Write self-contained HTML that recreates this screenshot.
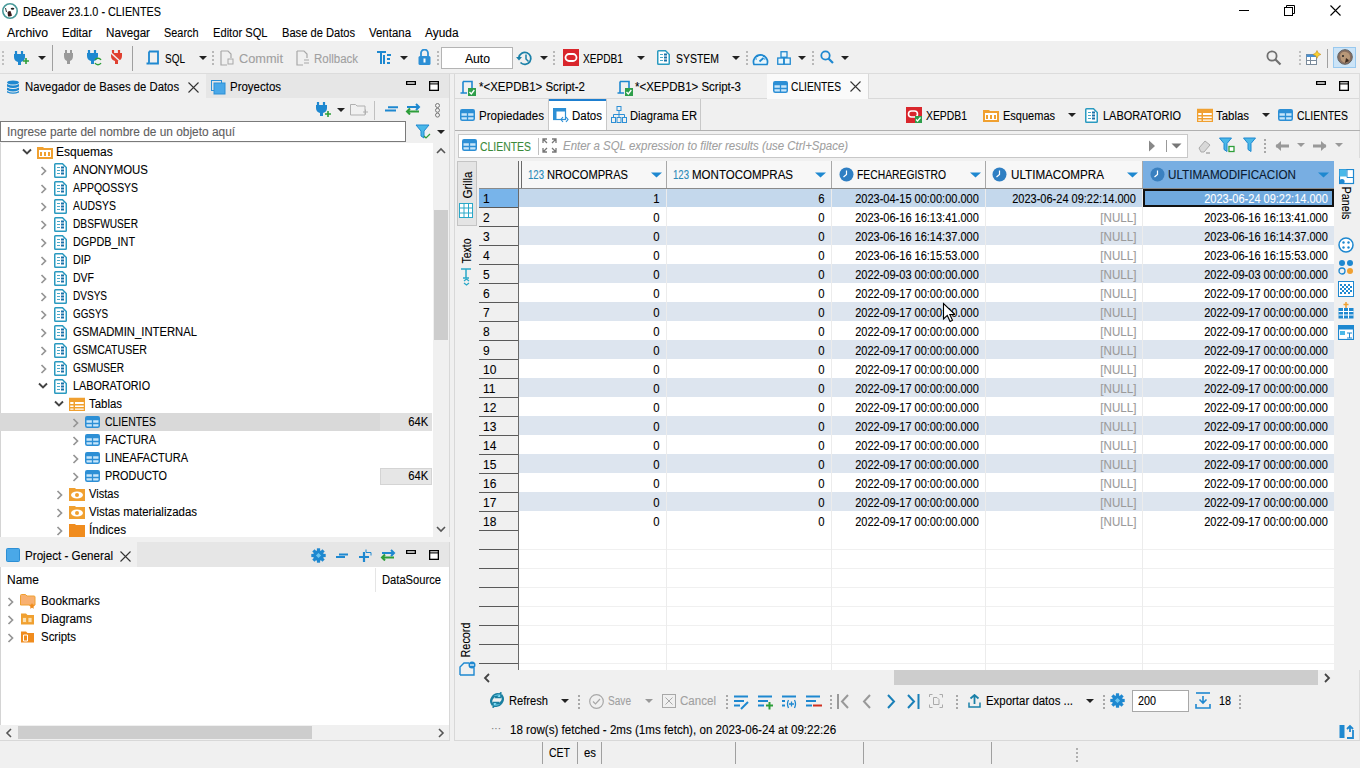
<!DOCTYPE html><html><head><meta charset="utf-8"><style>
html,body{margin:0;padding:0;width:1360px;height:768px;overflow:hidden;background:#f0f0f0;font-family:"Liberation Sans",sans-serif;}
.a{position:absolute;}
.t{position:absolute;white-space:nowrap;-webkit-text-stroke:0.1px currentColor;}

</style></head><body>
<div class="a" style="left:0px;top:0px;width:1360px;height:41px;background:#ffffff;"></div>
<svg class="a" style="left:2px;top:3px;" width="16" height="16" viewBox="0 0 16 16"><circle cx="8" cy="8" r="7.2" fill="#fff" stroke="#4a9a9a" stroke-width="1.6"/><path d="M5.5 9 q1-1 3-1 l1.5 4.5 q-2 1.5-4 0.8z" fill="#3a1a1a"/><ellipse cx="10.5" cy="5.8" rx="1.8" ry="1" fill="#222"/><path d="M3.5 5 l1 4" stroke="#333" stroke-width="1"/></svg>
<div class="t" style="top:5.3px;font-size:12px;line-height:15px;color:#000;left:23px;transform:scaleX(0.9038);transform-origin:0 0;">DBeaver 23.1.0 - CLIENTES</div>
<div class="a" style="left:1239px;top:10px;width:10px;height:1px;background:#000;"></div>
<svg class="a" style="left:1284px;top:5px;" width="11" height="11" viewBox="0 0 11 11"><rect x="0.5" y="2.5" width="8" height="8" fill="none" stroke="#000"/><path d="M2.5 2.5 v-2 h8 v8 h-2" fill="none" stroke="#000"/></svg>
<svg class="a" style="left:1330px;top:5px;" width="11" height="11" viewBox="0 0 11 11"><path d="M0.5 0.5 L10.5 10.5 M10.5 0.5 L0.5 10.5" stroke="#000" stroke-width="1.1"/></svg>
<div class="t" style="top:26.3px;font-size:12px;line-height:15px;color:#000;left:7px;transform:scaleX(1.0246);transform-origin:0 0;">Archivo</div>
<div class="t" style="top:26.3px;font-size:12px;line-height:15px;color:#000;left:62px;transform:scaleX(0.9571);transform-origin:0 0;">Editar</div>
<div class="t" style="top:26.3px;font-size:12px;line-height:15px;color:#000;left:106px;transform:scaleX(0.9700);transform-origin:0 0;">Navegar</div>
<div class="t" style="top:26.3px;font-size:12px;line-height:15px;color:#000;left:164px;transform:scaleX(0.9075);transform-origin:0 0;">Search</div>
<div class="t" style="top:26.3px;font-size:12px;line-height:15px;color:#000;left:213px;transform:scaleX(0.9289);transform-origin:0 0;">Editor SQL</div>
<div class="t" style="top:26.3px;font-size:12px;line-height:15px;color:#000;left:282px;transform:scaleX(0.9277);transform-origin:0 0;">Base de Datos</div>
<div class="t" style="top:26.3px;font-size:12px;line-height:15px;color:#000;left:369px;transform:scaleX(0.9539);transform-origin:0 0;">Ventana</div>
<div class="t" style="top:26.3px;font-size:12px;line-height:15px;color:#000;left:425px;transform:scaleX(0.9912);transform-origin:0 0;">Ayuda</div>
<div class="a" style="left:0px;top:41px;width:1360px;height:32px;background:#f0f0f0;"></div>
<div class="a" style="left:0px;top:73px;width:1360px;height:1px;background:#dcdcdc;"></div>
<div class="a" style="left:1.5px;top:51px;width:2px;height:2px;background:#c0c0c0;"></div>
<div class="a" style="left:1.5px;top:55px;width:2px;height:2px;background:#c0c0c0;"></div>
<div class="a" style="left:1.5px;top:59px;width:2px;height:2px;background:#c0c0c0;"></div>
<div class="a" style="left:1.5px;top:63px;width:2px;height:2px;background:#c0c0c0;"></div>
<svg class="a" style="left:13px;top:50px;" width="16" height="16" viewBox="0 0 16 16"><path d="M3 1 v3 M9 1 v3" stroke="#1e88d0" stroke-width="2.2"/><path d="M1 4 h11 v3 q0 4-4 5 v3 h-3 v-3 q-4-1-4-5z" fill="#1e88d0"/><path d="M10 11 h6 M13 8 v6" stroke="#2e9e3a" stroke-width="1.6"/></svg>
<svg class="a" style="left:37px;top:55px;" width="10" height="6" viewBox="0 0 10 6"><path d="M1 1 L9 1 L5 5 Z" fill="#222"/></svg>
<div class="a" style="left:52px;top:45px;width:1px;height:26px;background:#a0a0a0;"></div>
<svg class="a" style="left:64px;top:50px;" width="10" height="14" viewBox="0 0 10 14"><path d="M2 0 v3 M7 0 v3" stroke="#9a9a9a" stroke-width="2"/><path d="M0 3 h9 v3 q0 4-3 5 v3 h-3 v-3 q-3-1-3-5z" fill="#9a9a9a"/></svg>
<svg class="a" style="left:86px;top:50px;" width="16" height="16" viewBox="0 0 16 16"><path d="M3 0 v3 M9 0 v3" stroke="#1e88d0" stroke-width="2.2"/><path d="M1 3 h11 v3 q0 4-4 5 v3 h-3 v-3 q-4-1-4-5z" fill="#1e88d0"/><path d="M9 10 a3.5 3.5 0 0 1 6 0 M15 13 a3.5 3.5 0 0 1 -6 0" fill="none" stroke="#2e9e3a" stroke-width="1.4"/></svg>
<svg class="a" style="left:110px;top:50px;" width="14" height="16" viewBox="0 0 14 16"><path d="M3 0 v3 M9 0 v3" stroke="#e04030" stroke-width="2.2"/><path d="M1 3 h11 v3 q0 4-4 5 v3 h-3 v-3 q-4-1-4-5z" fill="#e04030"/><path d="M0 2 L13 14" stroke="#f0f0f0" stroke-width="1.5"/></svg>
<div class="a" style="left:132px;top:46px;width:1px;height:25px;background:#a0a0a0;"></div>
<svg class="a" style="left:146px;top:50px;" width="13" height="16" viewBox="0 0 13 16"><path d="M3 1.5 h9 v12 h-8 M3 1.5 v12 h-2.5" fill="none" stroke="#1e88d0" stroke-width="1.8"/></svg>
<div class="t" style="top:52.3px;font-size:12px;line-height:15px;color:#000;left:165px;transform:scaleX(0.8333);transform-origin:0 0;">SQL</div>
<svg class="a" style="left:198px;top:55px;" width="10" height="6" viewBox="0 0 10 6"><path d="M1 1 L9 1 L5 5 Z" fill="#222"/></svg>
<div class="a" style="left:211.5px;top:51px;width:2px;height:2px;background:#b8b8b8;"></div>
<div class="a" style="left:211.5px;top:55px;width:2px;height:2px;background:#b8b8b8;"></div>
<div class="a" style="left:211.5px;top:59px;width:2px;height:2px;background:#b8b8b8;"></div>
<div class="a" style="left:211.5px;top:63px;width:2px;height:2px;background:#b8b8b8;"></div>
<svg class="a" style="left:220px;top:50px;" width="14" height="16" viewBox="0 0 14 16"><path d="M1 1 h7 l3 3 v4 M1 1 v14 h6" fill="none" stroke="#a8a8a8" stroke-width="1.2"/><rect x="8" y="9" width="5" height="5" fill="none" stroke="#a8a8a8"/></svg>
<div class="t" style="top:52.3px;font-size:12px;line-height:15px;color:#a0a0a0;left:239px;transform:scaleX(1.0642);transform-origin:0 0;">Commit</div>
<svg class="a" style="left:296px;top:50px;" width="14" height="16" viewBox="0 0 14 16"><path d="M1 1 h7 l3 3 v4 M1 1 v14 h6" fill="none" stroke="#a8a8a8" stroke-width="1.2"/><path d="M8 10 h5 M8 13 h5" stroke="#a8a8a8"/></svg>
<div class="t" style="top:52.3px;font-size:12px;line-height:15px;color:#a0a0a0;left:314px;transform:scaleX(0.9559);transform-origin:0 0;">Rollback</div>
<svg class="a" style="left:376px;top:50px;" width="16" height="16" viewBox="0 0 16 16"><path d="M1 2 h9 M5 2 v12 M8 5 v9 M11 5 h4 M11 9 h3 M11 13 h3" stroke="#1e88d0" stroke-width="2"/></svg>
<svg class="a" style="left:399px;top:55px;" width="10" height="6" viewBox="0 0 10 6"><path d="M1 1 L9 1 L5 5 Z" fill="#222"/></svg>
<svg class="a" style="left:418px;top:49px;" width="13" height="17" viewBox="0 0 13 17"><path d="M3 7 v-3 a3.5 3.5 0 0 1 7 0 v3" fill="none" stroke="#2d8fd5" stroke-width="1.8"/><rect x="0.5" y="7" width="12" height="9" rx="1.5" fill="#2d8fd5"/><rect x="5.5" y="9.5" width="2" height="4" fill="#fff"/></svg>
<div class="a" style="left:436.5px;top:51px;width:2px;height:2px;background:#b8b8b8;"></div>
<div class="a" style="left:436.5px;top:55px;width:2px;height:2px;background:#b8b8b8;"></div>
<div class="a" style="left:436.5px;top:59px;width:2px;height:2px;background:#b8b8b8;"></div>
<div class="a" style="left:436.5px;top:63px;width:2px;height:2px;background:#b8b8b8;"></div>
<div class="a" style="left:441px;top:47px;width:72px;height:22px;background:#fff;box-sizing:border-box;border:1px solid #b4b4b4;"></div>
<div class="t" style="top:52.3px;font-size:12px;line-height:15px;color:#000;left:465px;transform:scaleX(1.0133);transform-origin:0 0;">Auto</div>
<svg class="a" style="left:516px;top:50px;" width="17" height="16" viewBox="0 0 17 16"><path d="M4.5 12.5 a6 6 0 1 0 -1.6 -5" fill="none" stroke="#1a80a8" stroke-width="1.8"/><path d="M0 7 h6 l-3 3.5z" fill="#1a80a8"/><path d="M10 4.5 v4.5 l2.5 2.5" fill="none" stroke="#1a80a8" stroke-width="1.5"/></svg>
<svg class="a" style="left:539px;top:55px;" width="10" height="6" viewBox="0 0 10 6"><path d="M1 1 L9 1 L5 5 Z" fill="#222"/></svg>
<div class="a" style="left:552.5px;top:51px;width:2px;height:2px;background:#b8b8b8;"></div>
<div class="a" style="left:552.5px;top:55px;width:2px;height:2px;background:#b8b8b8;"></div>
<div class="a" style="left:552.5px;top:59px;width:2px;height:2px;background:#b8b8b8;"></div>
<div class="a" style="left:552.5px;top:63px;width:2px;height:2px;background:#b8b8b8;"></div>
<svg class="a" style="left:563px;top:49px;" width="16" height="17" viewBox="0 0 16 17"><rect x="0" y="0" width="16" height="17" fill="#d9262c"/><rect x="2.5" y="5" width="11" height="7" rx="3.5" fill="none" stroke="#fff" stroke-width="1.8"/></svg>
<div class="t" style="top:52.3px;font-size:12px;line-height:15px;color:#000;left:583px;transform:scaleX(0.8449);transform-origin:0 0;">XEPDB1</div>
<svg class="a" style="left:636px;top:55px;" width="10" height="6" viewBox="0 0 10 6"><path d="M1 1 L9 1 L5 5 Z" fill="#222"/></svg>
<svg class="a" style="left:657px;top:50px;" width="13" height="15" viewBox="0 0 13 15"><path d="M0.75 1.5 q0-0.75 0.75-0.75 h7 l3.75 3.75 v9 q0 0.75-0.75 0.75 h-10 q-0.75 0-0.75-0.75z" fill="#fff" stroke="#2a9ac0" stroke-width="1.5"/><path d="M3 4.5 h3 M3 7.5 h3 M3 10.5 h3" stroke="#4aa8c8" stroke-width="1.1"/><path d="M7 4.5 h3 M7 7.5 h3 M7 10.5 h3" stroke="#1a70a8" stroke-width="1.8"/></svg>
<div class="t" style="top:52.3px;font-size:12px;line-height:15px;color:#000;left:676px;transform:scaleX(0.8717);transform-origin:0 0;">SYSTEM</div>
<svg class="a" style="left:731px;top:55px;" width="10" height="6" viewBox="0 0 10 6"><path d="M1 1 L9 1 L5 5 Z" fill="#222"/></svg>
<div class="a" style="left:745.5px;top:51px;width:2px;height:2px;background:#b8b8b8;"></div>
<div class="a" style="left:745.5px;top:55px;width:2px;height:2px;background:#b8b8b8;"></div>
<div class="a" style="left:745.5px;top:59px;width:2px;height:2px;background:#b8b8b8;"></div>
<div class="a" style="left:745.5px;top:63px;width:2px;height:2px;background:#b8b8b8;"></div>
<svg class="a" style="left:752px;top:51px;" width="17" height="15" viewBox="0 0 17 15"><path d="M2 13.5 a7 7 0 1 1 13 0 z" fill="#e8f6fc" stroke="#1e88d0" stroke-width="1.7"/><path d="M8.5 3 v1.5 M3.5 8 h1.5 M12 8 h1.5 M5 4.8 l1 1 M12 4.8 l-1 1" stroke="#1e88d0" stroke-width="1.2"/><path d="M7.5 10.5 l4 -3.5" stroke="#1e88d0" stroke-width="1.8"/></svg>
<svg class="a" style="left:777px;top:51px;" width="14" height="14" viewBox="0 0 14 14"><rect x="4" y="0.75" width="6" height="5.5" fill="#e8f6fc" stroke="#1e88d0" stroke-width="1.3"/><rect x="0.75" y="7" width="6" height="6.25" fill="#e8f6fc" stroke="#1e88d0" stroke-width="1.3"/><rect x="7.25" y="7" width="6" height="6.25" fill="#e8f6fc" stroke="#1e88d0" stroke-width="1.3"/></svg>
<svg class="a" style="left:797px;top:55px;" width="10" height="6" viewBox="0 0 10 6"><path d="M1 1 L9 1 L5 5 Z" fill="#222"/></svg>
<div class="a" style="left:811.5px;top:51px;width:2px;height:2px;background:#b8b8b8;"></div>
<div class="a" style="left:811.5px;top:55px;width:2px;height:2px;background:#b8b8b8;"></div>
<div class="a" style="left:811.5px;top:59px;width:2px;height:2px;background:#b8b8b8;"></div>
<div class="a" style="left:811.5px;top:63px;width:2px;height:2px;background:#b8b8b8;"></div>
<svg class="a" style="left:820px;top:50px;" width="14" height="14" viewBox="0 0 14 14"><circle cx="5.5" cy="5.5" r="4.2" fill="none" stroke="#1e88d0" stroke-width="1.8"/><path d="M8.5 8.5 l4.5 4.5" stroke="#1e88d0" stroke-width="2.2"/></svg>
<svg class="a" style="left:840px;top:55px;" width="10" height="6" viewBox="0 0 10 6"><path d="M1 1 L9 1 L5 5 Z" fill="#222"/></svg>
<svg class="a" style="left:1266px;top:50px;" width="16" height="16" viewBox="0 0 16 16"><circle cx="6" cy="6" r="4.6" fill="none" stroke="#707070" stroke-width="1.8"/><path d="M9.5 9.5 l5 5" stroke="#707070" stroke-width="2.2"/></svg>
<div class="a" style="left:1298.5px;top:51px;width:2px;height:2px;background:#c0c0c0;"></div>
<div class="a" style="left:1298.5px;top:55px;width:2px;height:2px;background:#c0c0c0;"></div>
<div class="a" style="left:1298.5px;top:59px;width:2px;height:2px;background:#c0c0c0;"></div>
<div class="a" style="left:1298.5px;top:63px;width:2px;height:2px;background:#c0c0c0;"></div>
<svg class="a" style="left:1306px;top:50px;" width="15" height="15" viewBox="0 0 15 15"><rect x="0.5" y="4.5" width="10" height="10" fill="#fff" stroke="#7a8a9a"/><rect x="0.5" y="4.5" width="10" height="2.5" fill="#4a90d0"/><path d="M0.5 10.5 h10 M4.5 7 v7.5" stroke="#7a8a9a"/><path d="M11 0.5 l1.3 2.6 2.6 1.3 -2.6 1.3 -1.3 2.6 -1.3 -2.6 -2.6 -1.3 2.6 -1.3z" fill="#f8d030" stroke="#c89020" stroke-width="0.6"/></svg>
<div class="a" style="left:1327px;top:49px;width:1px;height:19px;background:#a0a0a0;"></div>
<div class="a" style="left:1333px;top:47px;width:23px;height:21px;background:#cce4f7;box-sizing:border-box;border:1px solid #99c9ef;"></div>
<svg class="a" style="left:1337px;top:49px;" width="16" height="16" viewBox="0 0 16 16"><circle cx="8" cy="8" r="7.3" fill="#8a7060" stroke="#606060" stroke-width="1"/><path d="M3 6 q2-4 6-3 q4 1 4 5 q0 4-4 6 q-3 0-5-3z" fill="#b89878"/><circle cx="6" cy="7" r="1" fill="#222"/><path d="M9 9 q2 1 3 3 l-4 2z" fill="#3a2a20"/></svg>
<div class="a" style="left:0px;top:74px;width:450px;height:463px;background:#f0f0f0;"></div>
<div class="a" style="left:449px;top:74px;width:1px;height:463px;background:#d8d8d8;"></div>
<div class="a" style="left:0px;top:74px;width:449px;height:24px;background:#e6e6e6;"></div>
<div class="a" style="left:0px;top:74px;width:206px;height:24px;background:#f0f0f0;"></div>
<svg class="a" style="left:6px;top:80px;" width="14" height="14" viewBox="0 0 14 14"><ellipse cx="7" cy="2.5" rx="6" ry="2" fill="#1e88d0"/><path d="M1 4 q6 3 12 0 v2.5 q-6 3-12 0z M1 7.5 q6 3 12 0 v2.5 q-6 3-12 0z M1 11 q6 3 12 0 v1.5 q-6 2.5-12 0z" fill="#1e88d0"/></svg>
<div class="t" style="top:80.3px;font-size:12px;line-height:15px;color:#000;left:25px;transform:scaleX(0.9425);transform-origin:0 0;">Navegador de Bases de Datos</div>
<svg class="a" style="left:188px;top:82px;" width="11" height="11" viewBox="0 0 11 11"><path d="M0.5 0.5 L10.5 10.5 M10.5 0.5 L0.5 10.5" stroke="#333" stroke-width="1.1"/></svg>
<svg class="a" style="left:211px;top:80px;" width="15" height="15" viewBox="0 0 15 15"><rect x="0.5" y="0.5" width="10" height="10" fill="none" stroke="#2d8fd5"/><rect x="3" y="3" width="11" height="11" fill="#4aa8e8" stroke="#2d8fd5"/></svg>
<div class="t" style="top:80.3px;font-size:12px;line-height:15px;color:#000;left:230px;transform:scaleX(0.9561);transform-origin:0 0;">Proyectos</div>
<svg class="a" style="left:406px;top:81px;" width="10" height="4" viewBox="0 0 10 4"><rect x="0.65" y="0.65" width="8.7" height="2.7" fill="#fff" stroke="#000" stroke-width="1.3"/></svg>
<svg class="a" style="left:429px;top:81px;" width="10" height="10" viewBox="0 0 10 10"><rect x="0.65" y="0.65" width="8.7" height="8.7" fill="#fff" stroke="#000" stroke-width="1.3"/><path d="M0.65 2.9 h8.7" stroke="#000" stroke-width="1.1"/></svg>
<svg class="a" style="left:315px;top:102px;" width="17" height="16" viewBox="0 0 17 16"><path d="M3 0 v3 M9 0 v3" stroke="#1e88d0" stroke-width="2.2"/><path d="M1 3 h11 v3 q0 4-4 5 v3 h-3 v-3 q-4-1-4-5z" fill="#1e88d0"/><path d="M10 12 h6 M13 9 v6" stroke="#2e9e3a" stroke-width="1.6"/></svg>
<svg class="a" style="left:336px;top:107px;" width="10" height="6" viewBox="0 0 10 6"><path d="M1 1 L9 1 L5 5 Z" fill="#222"/></svg>
<svg class="a" style="left:350px;top:102px;" width="18" height="14" viewBox="0 0 18 14"><path d="M0.5 2.5 h5 l1.5 1.5 h8 v9 h-14.5z" fill="none" stroke="#b0b0b0"/><path d="M13 10 h5 M15.5 7.5 v5" stroke="#b0b0b0"/></svg>
<div class="a" style="left:374px;top:101px;width:1px;height:19px;background:#c0c0c0;"></div>
<svg class="a" style="left:384px;top:106px;" width="15" height="6" viewBox="0 0 15 6"><path d="M4 1.2 h10 M1 4.5 h11" stroke="#1e88d0" stroke-width="2"/></svg>
<svg class="a" style="left:404px;top:103px;" width="18" height="12" viewBox="0 0 18 12"><path d="M3 4 h12 M12 1 l3 3 -3 3" fill="none" stroke="#1e88d0" stroke-width="2"/><path d="M15 8.5 h-12 M6 5.5 l-3 3 3 3" fill="none" stroke="#2e9e3a" stroke-width="2"/></svg>
<svg class="a" style="left:434px;top:103px;" width="7" height="15" viewBox="0 0 7 15"><circle cx="3.5" cy="2.5" r="2" fill="none" stroke="#777"/><circle cx="3.5" cy="7.3" r="2" fill="none" stroke="#777"/><circle cx="3.5" cy="12.1" r="2" fill="none" stroke="#777"/></svg>
<div class="a" style="left:0px;top:121px;width:406px;height:21px;background:#fff;box-sizing:border-box;border:1px solid #7a7a7a;"></div>
<div class="t" style="top:125.3px;font-size:12px;line-height:15px;color:#606060;left:7px;transform:scaleX(0.9910);transform-origin:0 0;">Ingrese parte del nombre de un objeto aquí</div>
<svg class="a" style="left:415px;top:124px;" width="17" height="16" viewBox="0 0 17 16"><path d="M1 1 h13 l-5 6 v7 l-3 -2 v-5z" fill="#4ab8e8" stroke="#1e88d0" stroke-width="1"/><path d="M9 12 l2 2 4 -4" fill="none" stroke="#2e9e3a" stroke-width="1.2"/></svg>
<svg class="a" style="left:436px;top:129px;" width="10" height="6" viewBox="0 0 10 6"><path d="M1 1 L9 1 L5 5 Z" fill="#222"/></svg>
<div class="a" style="left:0px;top:143px;width:433px;height:394px;background:#ffffff;"></div>
<div class="a" style="left:433px;top:143px;width:16px;height:394px;background:#f0f0f0;"></div>
<div class="a" style="left:0px;top:143px;width:1px;height:394px;background:#d4d4d4;"></div>
<div class="a" style="left:434px;top:210px;width:14px;height:130px;background:#cdcdcd;"></div>
<svg class="a" style="left:436px;top:147px;" width="10" height="7" viewBox="0 0 10 7"><path d="M1 6 L5 2 L9 6" fill="none" stroke="#555" stroke-width="1.6"/></svg>
<svg class="a" style="left:436px;top:526px;" width="10" height="7" viewBox="0 0 10 7"><path d="M1 1 L5 5 L9 1" fill="none" stroke="#555" stroke-width="1.6"/></svg>
<svg class="a" style="left:22px;top:148px;" width="10" height="8" viewBox="0 0 10 8"><path d="M1 1.5 L5 5.5 L9 1.5" fill="none" stroke="#444" stroke-width="1.9"/></svg>
<svg class="a" style="left:37px;top:145px;" width="16" height="14" viewBox="0 0 16 14"><path d="M0 2 h6 l1 1 h9 v11 h-16z" fill="#f0a030"/><rect x="2" y="5" width="12" height="7" fill="#fff"/><rect x="3" y="7" width="2" height="4" fill="#f0a030"/><rect x="7" y="7" width="2" height="4" fill="#f0a030"/><rect x="11" y="7" width="2" height="4" fill="#f0a030"/></svg>
<div class="t" style="top:145.3px;font-size:12px;line-height:15px;color:#000;left:56px;">Esquemas</div>
<svg class="a" style="left:40px;top:166px;" width="8" height="10" viewBox="0 0 8 10"><path d="M1.5 1 L5.5 5 L1.5 9" fill="none" stroke="#959595" stroke-width="1.7"/></svg>
<svg class="a" style="left:54px;top:163px;" width="13" height="15" viewBox="0 0 13 15"><path d="M0.75 1.5 q0-0.75 0.75-0.75 h7 l3.75 3.75 v9 q0 0.75-0.75 0.75 h-10 q-0.75 0-0.75-0.75z" fill="#fff" stroke="#2a9ac0" stroke-width="1.5"/><path d="M3 4.5 h3 M3 7.5 h3 M3 10.5 h3" stroke="#4aa8c8" stroke-width="1.1"/><path d="M7 4.5 h3 M7 7.5 h3 M7 10.5 h3" stroke="#1a70a8" stroke-width="1.8"/></svg>
<div class="t" style="top:163.3px;font-size:12px;line-height:15px;color:#000;left:73px;transform:scaleX(0.9533);transform-origin:0 0;">ANONYMOUS</div>
<svg class="a" style="left:40px;top:184px;" width="8" height="10" viewBox="0 0 8 10"><path d="M1.5 1 L5.5 5 L1.5 9" fill="none" stroke="#959595" stroke-width="1.7"/></svg>
<svg class="a" style="left:54px;top:181px;" width="13" height="15" viewBox="0 0 13 15"><path d="M0.75 1.5 q0-0.75 0.75-0.75 h7 l3.75 3.75 v9 q0 0.75-0.75 0.75 h-10 q-0.75 0-0.75-0.75z" fill="#fff" stroke="#2a9ac0" stroke-width="1.5"/><path d="M3 4.5 h3 M3 7.5 h3 M3 10.5 h3" stroke="#4aa8c8" stroke-width="1.1"/><path d="M7 4.5 h3 M7 7.5 h3 M7 10.5 h3" stroke="#1a70a8" stroke-width="1.8"/></svg>
<div class="t" style="top:181.3px;font-size:12px;line-height:15px;color:#000;left:73px;transform:scaleX(0.8707);transform-origin:0 0;">APPQOSSYS</div>
<svg class="a" style="left:40px;top:202px;" width="8" height="10" viewBox="0 0 8 10"><path d="M1.5 1 L5.5 5 L1.5 9" fill="none" stroke="#959595" stroke-width="1.7"/></svg>
<svg class="a" style="left:54px;top:199px;" width="13" height="15" viewBox="0 0 13 15"><path d="M0.75 1.5 q0-0.75 0.75-0.75 h7 l3.75 3.75 v9 q0 0.75-0.75 0.75 h-10 q-0.75 0-0.75-0.75z" fill="#fff" stroke="#2a9ac0" stroke-width="1.5"/><path d="M3 4.5 h3 M3 7.5 h3 M3 10.5 h3" stroke="#4aa8c8" stroke-width="1.1"/><path d="M7 4.5 h3 M7 7.5 h3 M7 10.5 h3" stroke="#1a70a8" stroke-width="1.8"/></svg>
<div class="t" style="top:199.3px;font-size:12px;line-height:15px;color:#000;left:73px;transform:scaleX(0.8714);transform-origin:0 0;">AUDSYS</div>
<svg class="a" style="left:40px;top:220px;" width="8" height="10" viewBox="0 0 8 10"><path d="M1.5 1 L5.5 5 L1.5 9" fill="none" stroke="#959595" stroke-width="1.7"/></svg>
<svg class="a" style="left:54px;top:217px;" width="13" height="15" viewBox="0 0 13 15"><path d="M0.75 1.5 q0-0.75 0.75-0.75 h7 l3.75 3.75 v9 q0 0.75-0.75 0.75 h-10 q-0.75 0-0.75-0.75z" fill="#fff" stroke="#2a9ac0" stroke-width="1.5"/><path d="M3 4.5 h3 M3 7.5 h3 M3 10.5 h3" stroke="#4aa8c8" stroke-width="1.1"/><path d="M7 4.5 h3 M7 7.5 h3 M7 10.5 h3" stroke="#1a70a8" stroke-width="1.8"/></svg>
<div class="t" style="top:217.3px;font-size:12px;line-height:15px;color:#000;left:73px;transform:scaleX(0.8478);transform-origin:0 0;">DBSFWUSER</div>
<svg class="a" style="left:40px;top:238px;" width="8" height="10" viewBox="0 0 8 10"><path d="M1.5 1 L5.5 5 L1.5 9" fill="none" stroke="#959595" stroke-width="1.7"/></svg>
<svg class="a" style="left:54px;top:235px;" width="13" height="15" viewBox="0 0 13 15"><path d="M0.75 1.5 q0-0.75 0.75-0.75 h7 l3.75 3.75 v9 q0 0.75-0.75 0.75 h-10 q-0.75 0-0.75-0.75z" fill="#fff" stroke="#2a9ac0" stroke-width="1.5"/><path d="M3 4.5 h3 M3 7.5 h3 M3 10.5 h3" stroke="#4aa8c8" stroke-width="1.1"/><path d="M7 4.5 h3 M7 7.5 h3 M7 10.5 h3" stroke="#1a70a8" stroke-width="1.8"/></svg>
<div class="t" style="top:235.3px;font-size:12px;line-height:15px;color:#000;left:73px;transform:scaleX(0.9028);transform-origin:0 0;">DGPDB_INT</div>
<svg class="a" style="left:40px;top:256px;" width="8" height="10" viewBox="0 0 8 10"><path d="M1.5 1 L5.5 5 L1.5 9" fill="none" stroke="#959595" stroke-width="1.7"/></svg>
<svg class="a" style="left:54px;top:253px;" width="13" height="15" viewBox="0 0 13 15"><path d="M0.75 1.5 q0-0.75 0.75-0.75 h7 l3.75 3.75 v9 q0 0.75-0.75 0.75 h-10 q-0.75 0-0.75-0.75z" fill="#fff" stroke="#2a9ac0" stroke-width="1.5"/><path d="M3 4.5 h3 M3 7.5 h3 M3 10.5 h3" stroke="#4aa8c8" stroke-width="1.1"/><path d="M7 4.5 h3 M7 7.5 h3 M7 10.5 h3" stroke="#1a70a8" stroke-width="1.8"/></svg>
<div class="t" style="top:253.3px;font-size:12px;line-height:15px;color:#000;left:73px;transform:scaleX(0.9000);transform-origin:0 0;">DIP</div>
<svg class="a" style="left:40px;top:274px;" width="8" height="10" viewBox="0 0 8 10"><path d="M1.5 1 L5.5 5 L1.5 9" fill="none" stroke="#959595" stroke-width="1.7"/></svg>
<svg class="a" style="left:54px;top:271px;" width="13" height="15" viewBox="0 0 13 15"><path d="M0.75 1.5 q0-0.75 0.75-0.75 h7 l3.75 3.75 v9 q0 0.75-0.75 0.75 h-10 q-0.75 0-0.75-0.75z" fill="#fff" stroke="#2a9ac0" stroke-width="1.5"/><path d="M3 4.5 h3 M3 7.5 h3 M3 10.5 h3" stroke="#4aa8c8" stroke-width="1.1"/><path d="M7 4.5 h3 M7 7.5 h3 M7 10.5 h3" stroke="#1a70a8" stroke-width="1.8"/></svg>
<div class="t" style="top:271.3px;font-size:12px;line-height:15px;color:#000;left:73px;transform:scaleX(0.8750);transform-origin:0 0;">DVF</div>
<svg class="a" style="left:40px;top:292px;" width="8" height="10" viewBox="0 0 8 10"><path d="M1.5 1 L5.5 5 L1.5 9" fill="none" stroke="#959595" stroke-width="1.7"/></svg>
<svg class="a" style="left:54px;top:289px;" width="13" height="15" viewBox="0 0 13 15"><path d="M0.75 1.5 q0-0.75 0.75-0.75 h7 l3.75 3.75 v9 q0 0.75-0.75 0.75 h-10 q-0.75 0-0.75-0.75z" fill="#fff" stroke="#2a9ac0" stroke-width="1.5"/><path d="M3 4.5 h3 M3 7.5 h3 M3 10.5 h3" stroke="#4aa8c8" stroke-width="1.1"/><path d="M7 4.5 h3 M7 7.5 h3 M7 10.5 h3" stroke="#1a70a8" stroke-width="1.8"/></svg>
<div class="t" style="top:289.3px;font-size:12px;line-height:15px;color:#000;left:73px;transform:scaleX(0.8360);transform-origin:0 0;">DVSYS</div>
<svg class="a" style="left:40px;top:310px;" width="8" height="10" viewBox="0 0 8 10"><path d="M1.5 1 L5.5 5 L1.5 9" fill="none" stroke="#959595" stroke-width="1.7"/></svg>
<svg class="a" style="left:54px;top:307px;" width="13" height="15" viewBox="0 0 13 15"><path d="M0.75 1.5 q0-0.75 0.75-0.75 h7 l3.75 3.75 v9 q0 0.75-0.75 0.75 h-10 q-0.75 0-0.75-0.75z" fill="#fff" stroke="#2a9ac0" stroke-width="1.5"/><path d="M3 4.5 h3 M3 7.5 h3 M3 10.5 h3" stroke="#4aa8c8" stroke-width="1.1"/><path d="M7 4.5 h3 M7 7.5 h3 M7 10.5 h3" stroke="#1a70a8" stroke-width="1.8"/></svg>
<div class="t" style="top:307.3px;font-size:12px;line-height:15px;color:#000;left:73px;transform:scaleX(0.8205);transform-origin:0 0;">GGSYS</div>
<svg class="a" style="left:40px;top:328px;" width="8" height="10" viewBox="0 0 8 10"><path d="M1.5 1 L5.5 5 L1.5 9" fill="none" stroke="#959595" stroke-width="1.7"/></svg>
<svg class="a" style="left:54px;top:325px;" width="13" height="15" viewBox="0 0 13 15"><path d="M0.75 1.5 q0-0.75 0.75-0.75 h7 l3.75 3.75 v9 q0 0.75-0.75 0.75 h-10 q-0.75 0-0.75-0.75z" fill="#fff" stroke="#2a9ac0" stroke-width="1.5"/><path d="M3 4.5 h3 M3 7.5 h3 M3 10.5 h3" stroke="#4aa8c8" stroke-width="1.1"/><path d="M7 4.5 h3 M7 7.5 h3 M7 10.5 h3" stroke="#1a70a8" stroke-width="1.8"/></svg>
<div class="t" style="top:325.3px;font-size:12px;line-height:15px;color:#000;left:73px;transform:scaleX(0.9393);transform-origin:0 0;">GSMADMIN_INTERNAL</div>
<svg class="a" style="left:40px;top:346px;" width="8" height="10" viewBox="0 0 8 10"><path d="M1.5 1 L5.5 5 L1.5 9" fill="none" stroke="#959595" stroke-width="1.7"/></svg>
<svg class="a" style="left:54px;top:343px;" width="13" height="15" viewBox="0 0 13 15"><path d="M0.75 1.5 q0-0.75 0.75-0.75 h7 l3.75 3.75 v9 q0 0.75-0.75 0.75 h-10 q-0.75 0-0.75-0.75z" fill="#fff" stroke="#2a9ac0" stroke-width="1.5"/><path d="M3 4.5 h3 M3 7.5 h3 M3 10.5 h3" stroke="#4aa8c8" stroke-width="1.1"/><path d="M7 4.5 h3 M7 7.5 h3 M7 10.5 h3" stroke="#1a70a8" stroke-width="1.8"/></svg>
<div class="t" style="top:343.3px;font-size:12px;line-height:15px;color:#000;left:73px;transform:scaleX(0.8833);transform-origin:0 0;">GSMCATUSER</div>
<svg class="a" style="left:40px;top:364px;" width="8" height="10" viewBox="0 0 8 10"><path d="M1.5 1 L5.5 5 L1.5 9" fill="none" stroke="#959595" stroke-width="1.7"/></svg>
<svg class="a" style="left:54px;top:361px;" width="13" height="15" viewBox="0 0 13 15"><path d="M0.75 1.5 q0-0.75 0.75-0.75 h7 l3.75 3.75 v9 q0 0.75-0.75 0.75 h-10 q-0.75 0-0.75-0.75z" fill="#fff" stroke="#2a9ac0" stroke-width="1.5"/><path d="M3 4.5 h3 M3 7.5 h3 M3 10.5 h3" stroke="#4aa8c8" stroke-width="1.1"/><path d="M7 4.5 h3 M7 7.5 h3 M7 10.5 h3" stroke="#1a70a8" stroke-width="1.8"/></svg>
<div class="t" style="top:361.3px;font-size:12px;line-height:15px;color:#000;left:73px;transform:scaleX(0.8406);transform-origin:0 0;">GSMUSER</div>
<svg class="a" style="left:38px;top:382px;" width="10" height="8" viewBox="0 0 10 8"><path d="M1 1.5 L5 5.5 L9 1.5" fill="none" stroke="#444" stroke-width="1.9"/></svg>
<svg class="a" style="left:54px;top:379px;" width="13" height="15" viewBox="0 0 13 15"><path d="M0.75 1.5 q0-0.75 0.75-0.75 h7 l3.75 3.75 v9 q0 0.75-0.75 0.75 h-10 q-0.75 0-0.75-0.75z" fill="#fff" stroke="#2a9ac0" stroke-width="1.5"/><path d="M3 4.5 h3 M3 7.5 h3 M3 10.5 h3" stroke="#4aa8c8" stroke-width="1.1"/><path d="M7 4.5 h3 M7 7.5 h3 M7 10.5 h3" stroke="#1a70a8" stroke-width="1.8"/></svg>
<div class="t" style="top:379.3px;font-size:12px;line-height:15px;color:#000;left:73px;transform:scaleX(0.9001);transform-origin:0 0;">LABORATORIO</div>
<svg class="a" style="left:54px;top:400px;" width="10" height="8" viewBox="0 0 10 8"><path d="M1 1.5 L5 5.5 L9 1.5" fill="none" stroke="#444" stroke-width="1.9"/></svg>
<svg class="a" style="left:69px;top:397px;" width="16" height="14" viewBox="0 0 16 14"><rect x="0.5" y="1.5" width="15" height="12" fill="#fff" stroke="#f0a030" stroke-width="1.5"/><rect x="1" y="2" width="14" height="3" fill="#f0a030"/><rect x="1" y="7" width="14" height="1.5" fill="#f0a030"/><rect x="1" y="10" width="14" height="1.5" fill="#f0a030"/><rect x="4.5" y="2" width="1.5" height="11" fill="#f0a030"/></svg>
<div class="t" style="top:397.3px;font-size:12px;line-height:15px;color:#000;left:89px;transform:scaleX(0.9514);transform-origin:0 0;">Tablas</div>
<div class="a" style="left:0px;top:413px;width:380px;height:18px;background:#d9d9d9;"></div>
<div class="a" style="left:380px;top:413px;width:52px;height:18px;background:#e0e0e0;"></div>
<svg class="a" style="left:72px;top:418px;" width="8" height="10" viewBox="0 0 8 10"><path d="M1.5 1 L5.5 5 L1.5 9" fill="none" stroke="#959595" stroke-width="1.7"/></svg>
<svg class="a" style="left:85px;top:416px;" width="15" height="12" viewBox="0 0 15 12"><rect x="0.75" y="0.75" width="13.5" height="10.5" rx="1.5" fill="#c8e6fa" stroke="#2d8fd5" stroke-width="1.5"/><rect x="0.75" y="0.75" width="13.5" height="3.5" fill="#2d8fd5"/><path d="M0.75 7.5 h13.5 M7.5 4 v7" stroke="#2d8fd5" stroke-width="1.3"/></svg>
<div class="t" style="top:415.3px;font-size:12px;line-height:15px;color:#000;left:105px;transform:scaleX(0.8692);transform-origin:0 0;">CLIENTES</div>
<div class="t" style="top:415.3px;font-size:12px;line-height:15px;color:#000;right:932px;transform:scaleX(0.9370);transform-origin:100% 0;">64K</div>
<svg class="a" style="left:72px;top:436px;" width="8" height="10" viewBox="0 0 8 10"><path d="M1.5 1 L5.5 5 L1.5 9" fill="none" stroke="#959595" stroke-width="1.7"/></svg>
<svg class="a" style="left:85px;top:434px;" width="15" height="12" viewBox="0 0 15 12"><rect x="0.75" y="0.75" width="13.5" height="10.5" rx="1.5" fill="#c8e6fa" stroke="#2d8fd5" stroke-width="1.5"/><rect x="0.75" y="0.75" width="13.5" height="3.5" fill="#2d8fd5"/><path d="M0.75 7.5 h13.5 M7.5 4 v7" stroke="#2d8fd5" stroke-width="1.3"/></svg>
<div class="t" style="top:433.3px;font-size:12px;line-height:15px;color:#000;left:105px;transform:scaleX(0.9105);transform-origin:0 0;">FACTURA</div>
<svg class="a" style="left:72px;top:454px;" width="8" height="10" viewBox="0 0 8 10"><path d="M1.5 1 L5.5 5 L1.5 9" fill="none" stroke="#959595" stroke-width="1.7"/></svg>
<svg class="a" style="left:85px;top:452px;" width="15" height="12" viewBox="0 0 15 12"><rect x="0.75" y="0.75" width="13.5" height="10.5" rx="1.5" fill="#c8e6fa" stroke="#2d8fd5" stroke-width="1.5"/><rect x="0.75" y="0.75" width="13.5" height="3.5" fill="#2d8fd5"/><path d="M0.75 7.5 h13.5 M7.5 4 v7" stroke="#2d8fd5" stroke-width="1.3"/></svg>
<div class="t" style="top:451.3px;font-size:12px;line-height:15px;color:#000;left:105px;transform:scaleX(0.9152);transform-origin:0 0;">LINEAFACTURA</div>
<svg class="a" style="left:72px;top:472px;" width="8" height="10" viewBox="0 0 8 10"><path d="M1.5 1 L5.5 5 L1.5 9" fill="none" stroke="#959595" stroke-width="1.7"/></svg>
<svg class="a" style="left:85px;top:470px;" width="15" height="12" viewBox="0 0 15 12"><rect x="0.75" y="0.75" width="13.5" height="10.5" rx="1.5" fill="#c8e6fa" stroke="#2d8fd5" stroke-width="1.5"/><rect x="0.75" y="0.75" width="13.5" height="3.5" fill="#2d8fd5"/><path d="M0.75 7.5 h13.5 M7.5 4 v7" stroke="#2d8fd5" stroke-width="1.3"/></svg>
<div class="t" style="top:469.3px;font-size:12px;line-height:15px;color:#000;left:105px;transform:scaleX(0.9057);transform-origin:0 0;">PRODUCTO</div>
<div class="a" style="left:380px;top:468px;width:52px;height:17px;background:#e6e6e6;box-sizing:border-box;border:1px solid #d4d4d4;"></div>
<div class="t" style="top:469.3px;font-size:12px;line-height:15px;color:#000;right:932px;transform:scaleX(0.9370);transform-origin:100% 0;">64K</div>
<svg class="a" style="left:56px;top:490px;" width="8" height="10" viewBox="0 0 8 10"><path d="M1.5 1 L5.5 5 L1.5 9" fill="none" stroke="#959595" stroke-width="1.7"/></svg>
<svg class="a" style="left:69px;top:487px;" width="16" height="14" viewBox="0 0 16 14"><path d="M0 1 h6 l1 1 h9 v12 h-16z" fill="#f0a030"/><ellipse cx="8" cy="8" rx="6" ry="3.5" fill="#fff"/><circle cx="8" cy="8" r="2" fill="#f0a030"/></svg>
<div class="t" style="top:487.3px;font-size:12px;line-height:15px;color:#000;left:89px;transform:scaleX(0.9244);transform-origin:0 0;">Vistas</div>
<svg class="a" style="left:56px;top:508px;" width="8" height="10" viewBox="0 0 8 10"><path d="M1.5 1 L5.5 5 L1.5 9" fill="none" stroke="#959595" stroke-width="1.7"/></svg>
<svg class="a" style="left:69px;top:505px;" width="16" height="14" viewBox="0 0 16 14"><path d="M0 1 h6 l1 1 h9 v12 h-16z" fill="#f0a030"/><ellipse cx="8" cy="8" rx="6" ry="3.5" fill="#fff"/><circle cx="8" cy="8" r="2" fill="#f0a030"/></svg>
<div class="t" style="top:505.3px;font-size:12px;line-height:15px;color:#000;left:89px;transform:scaleX(0.9544);transform-origin:0 0;">Vistas materializadas</div>
<svg class="a" style="left:56px;top:526px;" width="8" height="10" viewBox="0 0 8 10"><path d="M1.5 1 L5.5 5 L1.5 9" fill="none" stroke="#959595" stroke-width="1.7"/></svg>
<svg class="a" style="left:69px;top:523px;" width="16" height="14" viewBox="0 0 16 14"><path d="M0 1 h6 l1 1 h9 v12 h-16z" fill="#f08c1e"/></svg>
<div class="t" style="top:523.3px;font-size:12px;line-height:15px;color:#000;left:89px;transform:scaleX(0.9733);transform-origin:0 0;">Índices</div>
<div class="a" style="left:0px;top:537px;width:450px;height:5px;background:#f0f0f0;"></div>
<div class="a" style="left:0px;top:542px;width:450px;height:199px;background:#f0f0f0;"></div>
<div class="a" style="left:449px;top:542px;width:1px;height:199px;background:#d8d8d8;"></div>
<div class="a" style="left:0px;top:542px;width:449px;height:25px;background:#e6e6e6;"></div>
<div class="a" style="left:0px;top:542px;width:137px;height:25px;background:#f0f0f0;"></div>
<svg class="a" style="left:6px;top:548px;" width="14" height="14" viewBox="0 0 14 14"><rect x="0.5" y="0.5" width="13" height="13" rx="1" fill="#4aa8e8" stroke="#2d8fd5"/></svg>
<div class="t" style="top:549.3px;font-size:12px;line-height:15px;color:#000;left:25px;transform:scaleX(0.9704);transform-origin:0 0;">Project - General</div>
<svg class="a" style="left:120px;top:551px;" width="11" height="11" viewBox="0 0 11 11"><path d="M0.5 0.5 L10.5 10.5 M10.5 0.5 L0.5 10.5" stroke="#333" stroke-width="1.1"/></svg>
<svg class="a" style="left:311px;top:548px;" width="15" height="15" viewBox="0 0 15 15"><circle cx="7.5" cy="7.5" r="5.30" fill="#1e88d0"/><rect x="5.90" y="0.3" width="3.2" height="3.5" fill="#1e88d0" transform="rotate(0 7.5 7.5)"/><rect x="5.90" y="0.3" width="3.2" height="3.5" fill="#1e88d0" transform="rotate(45 7.5 7.5)"/><rect x="5.90" y="0.3" width="3.2" height="3.5" fill="#1e88d0" transform="rotate(90 7.5 7.5)"/><rect x="5.90" y="0.3" width="3.2" height="3.5" fill="#1e88d0" transform="rotate(135 7.5 7.5)"/><rect x="5.90" y="0.3" width="3.2" height="3.5" fill="#1e88d0" transform="rotate(180 7.5 7.5)"/><rect x="5.90" y="0.3" width="3.2" height="3.5" fill="#1e88d0" transform="rotate(225 7.5 7.5)"/><rect x="5.90" y="0.3" width="3.2" height="3.5" fill="#1e88d0" transform="rotate(270 7.5 7.5)"/><rect x="5.90" y="0.3" width="3.2" height="3.5" fill="#1e88d0" transform="rotate(315 7.5 7.5)"/><path d="M7.5 4.9 l2.6 2.6 -2.6 2.6 -2.6 -2.6z" fill="#6cc4f0"/></svg>
<svg class="a" style="left:335px;top:553px;" width="14" height="6" viewBox="0 0 14 6"><path d="M1 4 h9 M4 1.5 h9" stroke="#1e88d0" stroke-width="2"/></svg>
<svg class="a" style="left:359px;top:549px;" width="13" height="14" viewBox="0 0 13 14"><path d="M0 8 h10 M5 3 v10" stroke="#1e88d0" stroke-width="2.2"/><path d="M7 0.5 v3 h5 v3" fill="none" stroke="#1e88d0" stroke-width="1"/></svg>
<svg class="a" style="left:379px;top:549px;" width="18" height="12" viewBox="0 0 18 12"><path d="M3 4 h12 M12 1 l3 3 -3 3" fill="none" stroke="#1e88d0" stroke-width="2"/><path d="M15 8.5 h-12 M6 5.5 l-3 3 3 3" fill="none" stroke="#2e9e3a" stroke-width="2"/></svg>
<svg class="a" style="left:406px;top:550px;" width="10" height="4" viewBox="0 0 10 4"><rect x="0.65" y="0.65" width="8.7" height="2.7" fill="#fff" stroke="#000" stroke-width="1.3"/></svg>
<svg class="a" style="left:429px;top:550px;" width="10" height="10" viewBox="0 0 10 10"><rect x="0.65" y="0.65" width="8.7" height="8.7" fill="#fff" stroke="#000" stroke-width="1.3"/><path d="M0.65 2.9 h8.7" stroke="#000" stroke-width="1.1"/></svg>
<div class="a" style="left:0px;top:567px;width:449px;height:158px;background:#ffffff;"></div>
<div class="a" style="left:0px;top:567px;width:1px;height:173px;background:#d4d4d4;"></div>
<div class="t" style="top:573.3px;font-size:12px;line-height:15px;color:#000;left:7px;transform:scaleX(0.9995);transform-origin:0 0;">Name</div>
<div class="a" style="left:375px;top:568px;width:1px;height:24px;background:#e5e5e5;"></div>
<div class="t" style="top:573.3px;font-size:12px;line-height:15px;color:#000;left:382px;transform:scaleX(0.9312);transform-origin:0 0;">DataSource</div>
<svg class="a" style="left:7px;top:597px;" width="8" height="10" viewBox="0 0 8 10"><path d="M1.5 1 L5.5 5 L1.5 9" fill="none" stroke="#959595" stroke-width="1.7"/></svg>
<svg class="a" style="left:20px;top:594px;" width="16" height="16" viewBox="0 0 16 16"><path d="M0.5 1.5 q0-1 1-1 h4 l1.5 1.5 h7 q1 0 1 1 v8 h-14.5z" fill="#f8b070" stroke="#f0a030"/><path d="M12 9 l1 2 2 0.3 -1.5 1.4 0.4 2 -1.9-1 -1.9 1 0.4-2 -1.5-1.4 2-0.3z" fill="#f08c1e"/></svg>
<div class="t" style="top:594.3px;font-size:12px;line-height:15px;color:#000;left:41px;transform:scaleX(0.9831);transform-origin:0 0;">Bookmarks</div>
<svg class="a" style="left:7px;top:615px;" width="8" height="10" viewBox="0 0 8 10"><path d="M1.5 1 L5.5 5 L1.5 9" fill="none" stroke="#959595" stroke-width="1.7"/></svg>
<svg class="a" style="left:20px;top:613px;" width="16" height="16" viewBox="0 0 16 16"><path d="M1 0.5 h5 l1.5 1.5 h6.5 v9.5 h-13z" fill="#f0a030"/><rect x="2.5" y="4.5" width="4" height="5" fill="#fbe0b0" stroke="#f0a030" stroke-width="0.8"/><rect x="8" y="4.5" width="4" height="5" fill="#fbe0b0" stroke="#f0a030" stroke-width="0.8"/></svg>
<div class="t" style="top:612.3px;font-size:12px;line-height:15px;color:#000;left:41px;transform:scaleX(0.9930);transform-origin:0 0;">Diagrams</div>
<svg class="a" style="left:7px;top:633px;" width="8" height="10" viewBox="0 0 8 10"><path d="M1.5 1 L5.5 5 L1.5 9" fill="none" stroke="#959595" stroke-width="1.7"/></svg>
<svg class="a" style="left:20px;top:631px;" width="16" height="16" viewBox="0 0 16 16"><path d="M1 0.5 h5 l1.5 1.5 h6.5 v9.5 h-13z" fill="#f08c1e"/><path d="M3.5 4 h4 v6 h-4z" fill="none" stroke="#fff" stroke-width="1"/></svg>
<div class="t" style="top:630.3px;font-size:12px;line-height:15px;color:#000;left:41px;transform:scaleX(0.9544);transform-origin:0 0;">Scripts</div>
<div class="a" style="left:0px;top:725px;width:449px;height:15px;background:#f0f0f0;"></div>
<div class="a" style="left:18px;top:726px;width:294px;height:13px;background:#cdcdcd;"></div>
<svg class="a" style="left:5px;top:728px;" width="8" height="10" viewBox="0 0 8 10"><path d="M6 1 L2 5 L6 9" fill="none" stroke="#555" stroke-width="1.6"/></svg>
<svg class="a" style="left:437px;top:728px;" width="8" height="10" viewBox="0 0 8 10"><path d="M2 1 L6 5 L2 9" fill="none" stroke="#555" stroke-width="1.6"/></svg>
<div class="a" style="left:0px;top:740px;width:450px;height:1px;background:#d8d8d8;"></div>
<div class="a" style="left:454px;top:74px;width:906px;height:667px;background:#f0f0f0;"></div>
<div class="a" style="left:454px;top:74px;width:1px;height:667px;background:#d8d8d8;"></div>
<div class="a" style="left:455px;top:74px;width:905px;height:25px;background:#f0f0f0;"></div>
<div class="a" style="left:455px;top:98px;width:905px;height:1px;background:#d9d9d9;"></div>
<div class="a" style="left:767px;top:74px;width:101px;height:25px;background:#fafafa;"></div>
<div class="a" style="left:868px;top:74px;width:1px;height:25px;background:#d9d9d9;"></div>
<svg class="a" style="left:460px;top:80px;" width="16" height="16" viewBox="0 0 16 16"><path d="M3 1.5 h9 v8 M3 1.5 v11.5 h-2.5 M1 13 h6" fill="none" stroke="#1e88d0" stroke-width="1.6"/><rect x="8" y="8" width="8" height="8" fill="#2e9e4a"/><path d="M9.5 12 l1.8 2 3-4" fill="none" stroke="#fff" stroke-width="1.3"/></svg>
<div class="t" style="top:80.3px;font-size:12px;line-height:15px;color:#000;left:479px;transform:scaleX(0.9574);transform-origin:0 0;">*&lt;XEPDB1&gt; Script-2</div>
<svg class="a" style="left:617px;top:80px;" width="16" height="16" viewBox="0 0 16 16"><path d="M3 1.5 h9 v8 M3 1.5 v11.5 h-2.5 M1 13 h6" fill="none" stroke="#1e88d0" stroke-width="1.6"/><rect x="8" y="8" width="8" height="8" fill="#2e9e4a"/><path d="M9.5 12 l1.8 2 3-4" fill="none" stroke="#fff" stroke-width="1.3"/></svg>
<div class="t" style="top:80.3px;font-size:12px;line-height:15px;color:#000;left:635px;transform:scaleX(0.9574);transform-origin:0 0;">*&lt;XEPDB1&gt; Script-3</div>
<svg class="a" style="left:773px;top:81px;" width="15" height="12" viewBox="0 0 15 12"><rect x="0.75" y="0.75" width="13.5" height="10.5" rx="1.5" fill="#c8e6fa" stroke="#2d8fd5" stroke-width="1.5"/><rect x="0.75" y="0.75" width="13.5" height="3.5" fill="#2d8fd5"/><path d="M0.75 7.5 h13.5 M7.5 4 v7" stroke="#2d8fd5" stroke-width="1.3"/></svg>
<div class="t" style="top:80.3px;font-size:12px;line-height:15px;color:#000;left:791px;transform:scaleX(0.8522);transform-origin:0 0;">CLIENTES</div>
<svg class="a" style="left:850px;top:81px;" width="11" height="11" viewBox="0 0 11 11"><path d="M0.5 0.5 L10.5 10.5 M10.5 0.5 L0.5 10.5" stroke="#333" stroke-width="1.1"/></svg>
<svg class="a" style="left:1316px;top:81px;" width="10" height="4" viewBox="0 0 10 4"><rect x="0.65" y="0.65" width="8.7" height="2.7" fill="#fff" stroke="#000" stroke-width="1.3"/></svg>
<svg class="a" style="left:1339px;top:81px;" width="10" height="10" viewBox="0 0 10 10"><rect x="0.65" y="0.65" width="8.7" height="8.7" fill="#fff" stroke="#000" stroke-width="1.3"/><path d="M0.65 2.9 h8.7" stroke="#000" stroke-width="1.1"/></svg>
<div class="a" style="left:1359px;top:74px;width:1px;height:667px;background:#dcdcdc;"></div>
<div class="a" style="left:455px;top:130px;width:905px;height:1px;background:#b0b0b0;"></div>
<div class="a" style="left:455px;top:99px;width:94px;height:30px;background:#f0f0f0;"></div>
<div class="a" style="left:549px;top:99px;width:57px;height:31px;background:#ffffff;"></div>
<div class="a" style="left:549px;top:99px;width:57px;height:2px;background:#1e7fd0;"></div>
<div class="a" style="left:548px;top:99px;width:1px;height:31px;background:#c8c8c8;"></div>
<div class="a" style="left:606px;top:99px;width:1px;height:31px;background:#c8c8c8;"></div>
<div class="a" style="left:700px;top:99px;width:1px;height:31px;background:#c8c8c8;"></div>
<svg class="a" style="left:460px;top:109px;" width="15" height="12" viewBox="0 0 15 12"><rect x="0.75" y="0.75" width="13.5" height="10.5" rx="1.5" fill="#c8e6fa" stroke="#2d8fd5" stroke-width="1.5"/><rect x="0.75" y="0.75" width="13.5" height="3.5" fill="#2d8fd5"/><path d="M0.75 7.5 h13.5 M7.5 4 v7" stroke="#2d8fd5" stroke-width="1.3"/></svg>
<div class="t" style="top:109.3px;font-size:12px;line-height:15px;color:#000;left:479px;transform:scaleX(0.9647);transform-origin:0 0;">Propiedades</div>
<svg class="a" style="left:553px;top:108px;" width="18" height="15" viewBox="0 0 18 15"><rect x="0.5" y="0.5" width="12" height="11" fill="none" stroke="#2d8fd5" stroke-width="1.2"/><rect x="0.5" y="0.5" width="12" height="3" fill="#2d8fd5"/><rect x="0.5" y="0.5" width="3" height="11" fill="#2d8fd5"/><path d="M10 9 l-2 2.5 2 2.5 M13 9 l2 2.5 -2 2.5" fill="none" stroke="#2d8fd5" stroke-width="1.2"/></svg>
<div class="t" style="top:109.3px;font-size:12px;line-height:15px;color:#000;left:572px;transform:scaleX(0.9571);transform-origin:0 0;">Datos</div>
<svg class="a" style="left:611px;top:106px;" width="16" height="17" viewBox="0 0 16 17"><rect x="6" y="0.5" width="4" height="4" fill="none" stroke="#2d8fd5"/><path d="M8 4.5 v4 M2.5 8.5 h11 M2.5 8.5 v3 M8 8.5 v3 M13.5 8.5 v3" fill="none" stroke="#2d8fd5"/><rect x="0.5" y="11.5" width="4" height="5" fill="none" stroke="#2d8fd5"/><rect x="6" y="11.5" width="4" height="5" fill="none" stroke="#2d8fd5"/><rect x="11.5" y="11.5" width="4" height="5" fill="none" stroke="#2d8fd5"/></svg>
<div class="t" style="top:109.3px;font-size:12px;line-height:15px;color:#000;left:630px;transform:scaleX(0.9302);transform-origin:0 0;">Diagrama ER</div>
<svg class="a" style="left:906px;top:107px;" width="16" height="16" viewBox="0 0 16 16"><rect x="0" y="0" width="16" height="16" fill="#d9262c"/><rect x="2.5" y="4" width="9" height="6" rx="3" fill="none" stroke="#fff" stroke-width="1.6"/><rect x="9" y="9" width="7" height="7" fill="#2e9e4a"/><path d="M10 12.5 l1.5 1.5 3-3.5" fill="none" stroke="#fff" stroke-width="1.2"/></svg>
<div class="t" style="top:109.3px;font-size:12px;line-height:15px;color:#000;left:926px;transform:scaleX(0.8660);transform-origin:0 0;">XEPDB1</div>
<svg class="a" style="left:983px;top:108px;" width="16" height="14" viewBox="0 0 16 14"><path d="M0 2 h6 l1 1 h9 v11 h-16z" fill="#f0a030"/><rect x="2" y="5" width="12" height="7" fill="#fff"/><rect x="3" y="7" width="2" height="4" fill="#f0a030"/><rect x="7" y="7" width="2" height="4" fill="#f0a030"/><rect x="11" y="7" width="2" height="4" fill="#f0a030"/></svg>
<div class="t" style="top:109.3px;font-size:12px;line-height:15px;color:#000;left:1003px;transform:scaleX(0.9173);transform-origin:0 0;">Esquemas</div>
<svg class="a" style="left:1067px;top:112px;" width="10" height="6" viewBox="0 0 10 6"><path d="M1 1 L9 1 L5 5 Z" fill="#222"/></svg>
<svg class="a" style="left:1085px;top:108px;" width="13" height="15" viewBox="0 0 13 15"><path d="M0.75 1.5 q0-0.75 0.75-0.75 h7 l3.75 3.75 v9 q0 0.75-0.75 0.75 h-10 q-0.75 0-0.75-0.75z" fill="#fff" stroke="#2a9ac0" stroke-width="1.5"/><path d="M3 4.5 h3 M3 7.5 h3 M3 10.5 h3" stroke="#4aa8c8" stroke-width="1.1"/><path d="M7 4.5 h3 M7 7.5 h3 M7 10.5 h3" stroke="#1a70a8" stroke-width="1.8"/></svg>
<div class="t" style="top:109.3px;font-size:12px;line-height:15px;color:#000;left:1103px;transform:scaleX(0.9118);transform-origin:0 0;">LABORATORIO</div>
<svg class="a" style="left:1197px;top:108px;" width="16" height="14" viewBox="0 0 16 14"><rect x="0.5" y="1.5" width="15" height="12" fill="#fff" stroke="#f0a030" stroke-width="1.5"/><rect x="1" y="2" width="14" height="3" fill="#f0a030"/><rect x="1" y="7" width="14" height="1.5" fill="#f0a030"/><rect x="1" y="10" width="14" height="1.5" fill="#f0a030"/><rect x="4.5" y="2" width="1.5" height="11" fill="#f0a030"/></svg>
<div class="t" style="top:109.3px;font-size:12px;line-height:15px;color:#000;left:1216px;transform:scaleX(0.9514);transform-origin:0 0;">Tablas</div>
<svg class="a" style="left:1261px;top:112px;" width="10" height="6" viewBox="0 0 10 6"><path d="M1 1 L9 1 L5 5 Z" fill="#222"/></svg>
<svg class="a" style="left:1278px;top:109px;" width="15" height="12" viewBox="0 0 15 12"><rect x="0.75" y="0.75" width="13.5" height="10.5" rx="1.5" fill="#c8e6fa" stroke="#2d8fd5" stroke-width="1.5"/><rect x="0.75" y="0.75" width="13.5" height="3.5" fill="#2d8fd5"/><path d="M0.75 7.5 h13.5 M7.5 4 v7" stroke="#2d8fd5" stroke-width="1.3"/></svg>
<div class="t" style="top:109.3px;font-size:12px;line-height:15px;color:#000;left:1297px;transform:scaleX(0.8692);transform-origin:0 0;">CLIENTES</div>
<div class="a" style="left:458px;top:134px;width:730px;height:24px;background:#ffffff;box-sizing:border-box;border:1px solid #c8c8c8;"></div>
<svg class="a" style="left:462px;top:139px;" width="15" height="12" viewBox="0 0 15 12"><rect x="0.75" y="0.75" width="13.5" height="10.5" rx="1.5" fill="#c8e6fa" stroke="#2d8fd5" stroke-width="1.5"/><rect x="0.75" y="0.75" width="13.5" height="3.5" fill="#2d8fd5"/><path d="M0.75 7.5 h13.5 M7.5 4 v7" stroke="#2d8fd5" stroke-width="1.3"/></svg>
<div class="t" style="top:140.3px;font-size:12px;line-height:15px;color:#3a8a3a;left:480px;transform:scaleX(0.8692);transform-origin:0 0;">CLIENTES</div>
<div class="a" style="left:538px;top:138px;width:1px;height:17px;background:#c0c0c0;"></div>
<svg class="a" style="left:542px;top:138px;" width="16" height="16" viewBox="0 0 16 16"><path d="M1 5 v-4 h4 M1 1 l4 4 M14 5 v-4 h-4 M14 1 l-4 4 M1 10 v4 h4 M1 14 l4 -4 M14 10 v4 h-4 M14 14 l-4 -4" fill="none" stroke="#777" stroke-width="1.3"/></svg>
<div class="t" style="top:139.3px;font-size:12px;line-height:15px;color:#a0a0a0;left:563px;transform:scaleX(0.9537);transform-origin:0 0;font-style:italic;">Enter a SQL expression to filter results (use Ctrl+Space)</div>
<svg class="a" style="left:1148px;top:140px;" width="8" height="12" viewBox="0 0 8 12"><path d="M1 0.5 L7 6 L1 11.5z" fill="#888"/></svg>
<div class="a" style="left:1166px;top:140px;width:1px;height:12px;background:#999;"></div>
<svg class="a" style="left:1171px;top:143px;" width="11" height="6" viewBox="0 0 11 6"><path d="M0.5 0.5 L10.5 0.5 L5.5 5.5z" fill="#777"/></svg>
<svg class="a" style="left:1197px;top:139px;" width="15" height="15" viewBox="0 0 15 15"><path d="M2 9 l6 -7 5 4 -6 7 h-3z" fill="#d8d8d8" stroke="#aaa"/><path d="M9 14 h4" stroke="#888"/></svg>
<svg class="a" style="left:1219px;top:137px;" width="16" height="17" viewBox="0 0 16 17"><path d="M0.5 1 h12 l-4.5 5.5 v8 l-3 -2 v-6z" fill="#4ab8e8" stroke="#1e88d0"/><rect x="10" y="9.5" width="5" height="5" fill="#fff" stroke="#2e9e3a" stroke-width="1.3"/></svg>
<svg class="a" style="left:1243px;top:137px;" width="13" height="17" viewBox="0 0 13 17"><path d="M0.5 1 h12 l-4.5 5.5 v8 l-3 -2 v-6z" fill="#4ab8e8" stroke="#1e88d0"/></svg>
<div class="a" style="left:1263.5px;top:139px;width:2px;height:2px;background:#a8a8a8;"></div>
<div class="a" style="left:1263.5px;top:143px;width:2px;height:2px;background:#a8a8a8;"></div>
<div class="a" style="left:1263.5px;top:147px;width:2px;height:2px;background:#a8a8a8;"></div>
<div class="a" style="left:1263.5px;top:151px;width:2px;height:2px;background:#a8a8a8;"></div>
<svg class="a" style="left:1275px;top:141px;" width="15" height="10" viewBox="0 0 15 10"><path d="M1 5 h13" stroke="#999" stroke-width="3"/><path d="M6 0 L0.5 5 L6 10z" fill="#999"/></svg>
<svg class="a" style="left:1297px;top:143px;" width="8" height="5" viewBox="0 0 8 5"><path d="M0 0 h8 l-4 4z" fill="#999"/></svg>
<svg class="a" style="left:1312px;top:141px;" width="15" height="10" viewBox="0 0 15 10"><path d="M1 5 h13" stroke="#999" stroke-width="3"/><path d="M9 0 L14.5 5 L9 10z" fill="#999"/></svg>
<svg class="a" style="left:1335px;top:143px;" width="8" height="5" viewBox="0 0 8 5"><path d="M0 0 h8 l-4 4z" fill="#999"/></svg>
<div class="a" style="left:455px;top:158px;width:24px;height:512px;background:#f0f0f0;"></div>
<div class="a" style="left:457px;top:161px;width:20px;height:65px;background:#e4e4e4;box-sizing:border-box;border:1px solid #c4c4c4;"></div>
<div class="t" style="left:453.5px;top:177px;width:28.0px;height:16px;line-height:16px;font-size:12px;color:#000;text-align:center;transform:rotate(-90deg) scaleX(0.9637);transform-origin:50% 50%;">Grilla</div>
<svg class="a" style="left:459px;top:203px;" width="14" height="15" viewBox="0 0 14 15"><rect x="0.5" y="0.5" width="13" height="14" fill="#fff" stroke="#2aa8c8"/><path d="M0.5 5 h13 M0.5 10 h13 M5 0.5 v14 M9.5 0.5 v14" stroke="#2aa8c8"/></svg>
<div class="t" style="left:453.2px;top:243px;width:28.7px;height:16px;line-height:16px;font-size:12px;color:#000;text-align:center;transform:rotate(-90deg) scaleX(0.8719);transform-origin:50% 50%;">Texto</div>
<svg class="a" style="left:460px;top:268px;" width="13" height="18" viewBox="0 0 13 18"><path d="M1 1 h10 M6 1 v9 M3 10 h6" fill="none" stroke="#2aa8c8" stroke-width="1.5"/><path d="M4 13 l2.5-2 2.5 2 M4 15 l2.5 2 2.5-2" fill="none" stroke="#2aa8c8" stroke-width="1.3"/></svg>
<div class="t" style="left:447.2px;top:632px;width:38.7px;height:16px;line-height:16px;font-size:12px;color:#000;text-align:center;transform:rotate(-90deg) scaleX(0.9047);transform-origin:50% 50%;">Record</div>
<svg class="a" style="left:459px;top:661px;" width="17" height="15" viewBox="0 0 17 15"><path d="M1 14 v-8 l4 -4 h5 M1 14 h14 v-7" fill="none" stroke="#1e88d0" stroke-width="1.4"/><circle cx="13" cy="4" r="3.5" fill="#1e88d0"/><path d="M11 4 h4" stroke="#fff" stroke-width="1.2"/></svg>
<div class="a" style="left:1334px;top:158px;width:26px;height:512px;background:#f0f0f0;"></div>
<svg class="a" style="left:1339px;top:169px;" width="16" height="16" viewBox="0 0 16 16"><rect x="0.5" y="0.5" width="14" height="14" fill="#fff" stroke="#1e88d0" stroke-width="1.2"/><rect x="0.5" y="0.5" width="7" height="7" fill="#4ab8e8"/><path d="M8 0.5 v8 h6.5" fill="none" stroke="#1e88d0"/><circle cx="3" cy="12.5" r="2.6" fill="#1e88d0"/></svg>
<div class="t" style="left:1328.2px;top:195px;width:36.7px;height:16px;line-height:16px;font-size:12px;color:#000;text-align:center;transform:rotate(90deg) scaleX(0.8995);transform-origin:50% 50%;">Panels</div>
<svg class="a" style="left:1338px;top:237px;" width="16" height="16" viewBox="0 0 16 16"><circle cx="8" cy="8" r="7" fill="#fff" stroke="#1e88d0" stroke-width="1.5"/><circle cx="5.5" cy="5.5" r="1.2" fill="#1e88d0"/><circle cx="10.5" cy="5.5" r="1.2" fill="#1e88d0"/><circle cx="5.5" cy="10.5" r="1.2" fill="#1e88d0"/><circle cx="10.5" cy="10.5" r="1.2" fill="#1e88d0"/></svg>
<svg class="a" style="left:1338px;top:259px;" width="16" height="16" viewBox="0 0 16 16"><circle cx="4" cy="4" r="3" fill="#1e88d0"/><circle cx="12" cy="4" r="3" fill="#1e88d0"/><circle cx="4" cy="12" r="3" fill="none" stroke="#1e88d0" stroke-width="1.3"/><circle cx="12" cy="12" r="3" fill="#f0a030"/></svg>
<svg class="a" style="left:1338px;top:281px;" width="16" height="16" viewBox="0 0 16 16"><rect x="0.5" y="0.5" width="15" height="15" fill="#fff" stroke="#1e88d0"/><path d="M2 3 h2 v2 h-2z M6 3 h2 v2 h-2z M10 3 h2 v2 h-2z M4 5 h2 v2 h-2z M8 5 h2 v2 h-2z M12 5 h2 v2 h-2z M2 7 h2 v2 h-2z M6 7 h2 v2 h-2z M10 7 h2 v2 h-2z M4 9 h2 v2 h-2z M8 9 h2 v2 h-2z M12 9 h2 v2 h-2z M2 11 h2 v2 h-2z M6 11 h2 v2 h-2z M10 11 h2 v2 h-2z" fill="#1e88d0"/></svg>
<svg class="a" style="left:1338px;top:302px;" width="16" height="17" viewBox="0 0 16 17"><rect x="0.5" y="6" width="15" height="10.5" fill="#1e88d0"/><path d="M0.5 9.5 h15 M0.5 13 h15 M5.5 6 v10.5 M10.5 6 v10.5" stroke="#fff"/><path d="M8 0 v6 M5.5 2.5 h5" stroke="#f0a030" stroke-width="1.5"/></svg>
<svg class="a" style="left:1338px;top:325px;" width="16" height="15" viewBox="0 0 16 15"><rect x="0.5" y="0.5" width="15" height="14" fill="#fff" stroke="#1e88d0" stroke-width="1.2"/><rect x="0.5" y="0.5" width="15" height="4" fill="#1e88d0"/><path d="M9 8 h5 M11.5 8 v5 M9 13 h5" stroke="#1e88d0"/><rect x="2" y="6" width="5" height="4" fill="#4ab8e8"/></svg>
<div class="a" style="left:479px;top:161px;width:855px;height:509px;background:#ffffff;"></div>
<div class="a" style="left:479px;top:161px;width:40px;height:509px;background:#f0f0f0;"></div>
<div class="a" style="left:519px;top:161px;width:815px;height:27px;background:#f7f7f7;"></div>
<div class="a" style="left:479px;top:188px;width:855px;height:1px;background:#8a8a8a;"></div>
<div class="a" style="left:518px;top:161px;width:1px;height:509px;background:#6a6a6a;"></div>
<div class="a" style="left:521px;top:161px;width:1px;height:27px;background:#6a6a6a;"></div>
<div class="a" style="left:666px;top:161px;width:1px;height:27px;background:#a8a8a8;"></div>
<div class="a" style="left:831px;top:161px;width:1px;height:27px;background:#a8a8a8;"></div>
<div class="a" style="left:985px;top:161px;width:1px;height:27px;background:#a8a8a8;"></div>
<div class="a" style="left:1142px;top:161px;width:1px;height:27px;background:#a8a8a8;"></div>
<div class="a" style="left:1143px;top:161px;width:191px;height:27px;background:#78aee2;"></div>
<div class="t" style="top:168.3px;font-size:12px;line-height:15px;color:#2a8ab8;left:528px;transform:scaleX(0.7994);transform-origin:0 0;">123</div>
<div class="t" style="top:168.3px;font-size:12px;line-height:15px;color:#000;left:547px;transform:scaleX(0.9274);transform-origin:0 0;">NROCOMPRAS</div>
<svg class="a" style="left:651px;top:172px;" width="11" height="6" viewBox="0 0 11 6"><path d="M0 0.5 h11 l-5.5 5z" fill="#1e88d0"/></svg>
<div class="t" style="top:168.3px;font-size:12px;line-height:15px;color:#2a8ab8;left:673px;transform:scaleX(0.7994);transform-origin:0 0;">123</div>
<div class="t" style="top:168.3px;font-size:12px;line-height:15px;color:#000;left:692px;transform:scaleX(0.9609);transform-origin:0 0;">MONTOCOMPRAS</div>
<svg class="a" style="left:815px;top:172px;" width="11" height="6" viewBox="0 0 11 6"><path d="M0 0.5 h11 l-5.5 5z" fill="#1e88d0"/></svg>
<svg class="a" style="left:839px;top:167px;" width="15" height="15" viewBox="0 0 15 15"><circle cx="7.5" cy="7.5" r="7" fill="#2f7fc3"/><path d="M7.5 3.5 v4 l-3 2.5" fill="none" stroke="#fff" stroke-width="1.2"/></svg>
<div class="t" style="top:168.3px;font-size:12px;line-height:15px;color:#000;left:857px;transform:scaleX(0.8613);transform-origin:0 0;">FECHAREGISTRO</div>
<svg class="a" style="left:970px;top:172px;" width="11" height="6" viewBox="0 0 11 6"><path d="M0 0.5 h11 l-5.5 5z" fill="#1e88d0"/></svg>
<svg class="a" style="left:992px;top:167px;" width="15" height="15" viewBox="0 0 15 15"><circle cx="7.5" cy="7.5" r="7" fill="#2f7fc3"/><path d="M7.5 3.5 v4 l-3 2.5" fill="none" stroke="#fff" stroke-width="1.2"/></svg>
<div class="t" style="top:168.3px;font-size:12px;line-height:15px;color:#000;left:1011px;transform:scaleX(0.9710);transform-origin:0 0;">ULTIMACOMPRA</div>
<svg class="a" style="left:1127px;top:172px;" width="11" height="6" viewBox="0 0 11 6"><path d="M0 0.5 h11 l-5.5 5z" fill="#1e88d0"/></svg>
<svg class="a" style="left:1150px;top:167px;" width="15" height="15" viewBox="0 0 15 15"><circle cx="7.5" cy="7.5" r="7" fill="#3a80c0"/><path d="M7.5 3.5 v4 l-3 2.5" fill="none" stroke="#fff" stroke-width="1.2"/></svg>
<div class="t" style="top:168.3px;font-size:12px;line-height:15px;color:#0a1a30;left:1168px;transform:scaleX(0.9714);transform-origin:0 0;">ULTIMAMODIFICACION</div>
<svg class="a" style="left:1318px;top:172px;" width="11" height="6" viewBox="0 0 11 6"><path d="M0 0.5 h11 l-5.5 5z" fill="#1e88d0"/></svg>
<div class="a" style="left:479px;top:189px;width:39px;height:18px;background:#78b4ea;"></div>
<div class="a" style="left:519px;top:189px;width:815px;height:18px;background:#c4d8ec;"></div>
<div class="a" style="left:479px;top:207px;width:39px;height:1px;background:#5a5a5a;"></div>
<div class="a" style="left:479px;top:226px;width:39px;height:1px;background:#5a5a5a;"></div>
<div class="a" style="left:519px;top:226px;width:815px;height:19px;background:#dde5ef;"></div>
<div class="a" style="left:479px;top:245px;width:39px;height:1px;background:#5a5a5a;"></div>
<div class="a" style="left:479px;top:264px;width:39px;height:1px;background:#5a5a5a;"></div>
<div class="a" style="left:519px;top:264px;width:815px;height:19px;background:#dde5ef;"></div>
<div class="a" style="left:479px;top:283px;width:39px;height:1px;background:#5a5a5a;"></div>
<div class="a" style="left:479px;top:302px;width:39px;height:1px;background:#5a5a5a;"></div>
<div class="a" style="left:519px;top:302px;width:815px;height:19px;background:#dde5ef;"></div>
<div class="a" style="left:479px;top:321px;width:39px;height:1px;background:#5a5a5a;"></div>
<div class="a" style="left:479px;top:340px;width:39px;height:1px;background:#5a5a5a;"></div>
<div class="a" style="left:519px;top:340px;width:815px;height:19px;background:#dde5ef;"></div>
<div class="a" style="left:479px;top:359px;width:39px;height:1px;background:#5a5a5a;"></div>
<div class="a" style="left:479px;top:378px;width:39px;height:1px;background:#5a5a5a;"></div>
<div class="a" style="left:519px;top:378px;width:815px;height:19px;background:#dde5ef;"></div>
<div class="a" style="left:479px;top:397px;width:39px;height:1px;background:#5a5a5a;"></div>
<div class="a" style="left:479px;top:416px;width:39px;height:1px;background:#5a5a5a;"></div>
<div class="a" style="left:519px;top:416px;width:815px;height:19px;background:#dde5ef;"></div>
<div class="a" style="left:479px;top:435px;width:39px;height:1px;background:#5a5a5a;"></div>
<div class="a" style="left:479px;top:454px;width:39px;height:1px;background:#5a5a5a;"></div>
<div class="a" style="left:519px;top:454px;width:815px;height:19px;background:#dde5ef;"></div>
<div class="a" style="left:479px;top:473px;width:39px;height:1px;background:#5a5a5a;"></div>
<div class="a" style="left:479px;top:492px;width:39px;height:1px;background:#5a5a5a;"></div>
<div class="a" style="left:519px;top:492px;width:815px;height:19px;background:#dde5ef;"></div>
<div class="a" style="left:479px;top:511px;width:39px;height:1px;background:#5a5a5a;"></div>
<div class="a" style="left:479px;top:530px;width:39px;height:1px;background:#5a5a5a;"></div>
<div class="a" style="left:479px;top:549px;width:39px;height:1px;background:#5a5a5a;"></div>
<div class="a" style="left:519px;top:549px;width:815px;height:1px;background:#f0f0f0;"></div>
<div class="a" style="left:479px;top:568px;width:39px;height:1px;background:#5a5a5a;"></div>
<div class="a" style="left:519px;top:568px;width:815px;height:1px;background:#f0f0f0;"></div>
<div class="a" style="left:479px;top:587px;width:39px;height:1px;background:#5a5a5a;"></div>
<div class="a" style="left:519px;top:587px;width:815px;height:1px;background:#f0f0f0;"></div>
<div class="a" style="left:479px;top:606px;width:39px;height:1px;background:#5a5a5a;"></div>
<div class="a" style="left:519px;top:606px;width:815px;height:1px;background:#f0f0f0;"></div>
<div class="a" style="left:479px;top:625px;width:39px;height:1px;background:#5a5a5a;"></div>
<div class="a" style="left:519px;top:625px;width:815px;height:1px;background:#f0f0f0;"></div>
<div class="a" style="left:479px;top:644px;width:39px;height:1px;background:#5a5a5a;"></div>
<div class="a" style="left:519px;top:644px;width:815px;height:1px;background:#f0f0f0;"></div>
<div class="a" style="left:479px;top:663px;width:39px;height:1px;background:#5a5a5a;"></div>
<div class="a" style="left:519px;top:663px;width:815px;height:1px;background:#f0f0f0;"></div>
<div class="a" style="left:666px;top:189px;width:1px;height:481px;background:#ececec;"></div>
<div class="a" style="left:831px;top:189px;width:1px;height:481px;background:#ececec;"></div>
<div class="a" style="left:985px;top:189px;width:1px;height:481px;background:#ececec;"></div>
<div class="a" style="left:1142px;top:189px;width:1px;height:481px;background:#ececec;"></div>
<div class="a" style="left:1143px;top:189px;width:191px;height:18px;background:#70a9de;box-sizing:border-box;border:2px solid #111;"></div>
<div class="t" style="top:191.8px;font-size:12px;line-height:15px;color:#000;left:483px;">1</div>
<div class="t" style="top:191.8px;font-size:12px;line-height:15px;color:#000;right:700px;transform:scaleX(0.9443);transform-origin:100% 0;">1</div>
<div class="t" style="top:191.8px;font-size:12px;line-height:15px;color:#000;right:535px;transform:scaleX(0.9443);transform-origin:100% 0;">6</div>
<div class="t" style="top:191.8px;font-size:12px;line-height:15px;color:#000;right:381px;transform:scaleX(0.9166);transform-origin:100% 0;">2023-04-15 00:00:00.000</div>
<div class="t" style="top:191.8px;font-size:12px;line-height:15px;color:#000;right:224px;transform:scaleX(0.9166);transform-origin:100% 0;">2023-06-24 09:22:14.000</div>
<div class="t" style="top:191.8px;font-size:12px;line-height:15px;color:#fff;right:32px;transform:scaleX(0.9166);transform-origin:100% 0;">2023-06-24 09:22:14.000</div>
<div class="t" style="top:210.8px;font-size:12px;line-height:15px;color:#000;left:483px;">2</div>
<div class="t" style="top:210.8px;font-size:12px;line-height:15px;color:#000;right:700px;transform:scaleX(0.9443);transform-origin:100% 0;">0</div>
<div class="t" style="top:210.8px;font-size:12px;line-height:15px;color:#000;right:535px;transform:scaleX(0.9443);transform-origin:100% 0;">0</div>
<div class="t" style="top:210.8px;font-size:12px;line-height:15px;color:#000;right:381px;transform:scaleX(0.9166);transform-origin:100% 0;">2023-06-16 16:13:41.000</div>
<div class="t" style="top:210.8px;font-size:12px;line-height:15px;color:#9a9a9a;right:224px;transform:scaleX(0.9640);transform-origin:100% 0;">[NULL]</div>
<div class="t" style="top:210.8px;font-size:12px;line-height:15px;color:#000;right:32px;transform:scaleX(0.9166);transform-origin:100% 0;">2023-06-16 16:13:41.000</div>
<div class="t" style="top:229.8px;font-size:12px;line-height:15px;color:#000;left:483px;">3</div>
<div class="t" style="top:229.8px;font-size:12px;line-height:15px;color:#000;right:700px;transform:scaleX(0.9443);transform-origin:100% 0;">0</div>
<div class="t" style="top:229.8px;font-size:12px;line-height:15px;color:#000;right:535px;transform:scaleX(0.9443);transform-origin:100% 0;">0</div>
<div class="t" style="top:229.8px;font-size:12px;line-height:15px;color:#000;right:381px;transform:scaleX(0.9166);transform-origin:100% 0;">2023-06-16 16:14:37.000</div>
<div class="t" style="top:229.8px;font-size:12px;line-height:15px;color:#9a9a9a;right:224px;transform:scaleX(0.9640);transform-origin:100% 0;">[NULL]</div>
<div class="t" style="top:229.8px;font-size:12px;line-height:15px;color:#000;right:32px;transform:scaleX(0.9166);transform-origin:100% 0;">2023-06-16 16:14:37.000</div>
<div class="t" style="top:248.8px;font-size:12px;line-height:15px;color:#000;left:483px;">4</div>
<div class="t" style="top:248.8px;font-size:12px;line-height:15px;color:#000;right:700px;transform:scaleX(0.9443);transform-origin:100% 0;">0</div>
<div class="t" style="top:248.8px;font-size:12px;line-height:15px;color:#000;right:535px;transform:scaleX(0.9443);transform-origin:100% 0;">0</div>
<div class="t" style="top:248.8px;font-size:12px;line-height:15px;color:#000;right:381px;transform:scaleX(0.9166);transform-origin:100% 0;">2023-06-16 16:15:53.000</div>
<div class="t" style="top:248.8px;font-size:12px;line-height:15px;color:#9a9a9a;right:224px;transform:scaleX(0.9640);transform-origin:100% 0;">[NULL]</div>
<div class="t" style="top:248.8px;font-size:12px;line-height:15px;color:#000;right:32px;transform:scaleX(0.9166);transform-origin:100% 0;">2023-06-16 16:15:53.000</div>
<div class="t" style="top:267.8px;font-size:12px;line-height:15px;color:#000;left:483px;">5</div>
<div class="t" style="top:267.8px;font-size:12px;line-height:15px;color:#000;right:700px;transform:scaleX(0.9443);transform-origin:100% 0;">0</div>
<div class="t" style="top:267.8px;font-size:12px;line-height:15px;color:#000;right:535px;transform:scaleX(0.9443);transform-origin:100% 0;">0</div>
<div class="t" style="top:267.8px;font-size:12px;line-height:15px;color:#000;right:381px;transform:scaleX(0.9166);transform-origin:100% 0;">2022-09-03 00:00:00.000</div>
<div class="t" style="top:267.8px;font-size:12px;line-height:15px;color:#9a9a9a;right:224px;transform:scaleX(0.9640);transform-origin:100% 0;">[NULL]</div>
<div class="t" style="top:267.8px;font-size:12px;line-height:15px;color:#000;right:32px;transform:scaleX(0.9166);transform-origin:100% 0;">2022-09-03 00:00:00.000</div>
<div class="t" style="top:286.8px;font-size:12px;line-height:15px;color:#000;left:483px;">6</div>
<div class="t" style="top:286.8px;font-size:12px;line-height:15px;color:#000;right:700px;transform:scaleX(0.9443);transform-origin:100% 0;">0</div>
<div class="t" style="top:286.8px;font-size:12px;line-height:15px;color:#000;right:535px;transform:scaleX(0.9443);transform-origin:100% 0;">0</div>
<div class="t" style="top:286.8px;font-size:12px;line-height:15px;color:#000;right:381px;transform:scaleX(0.9166);transform-origin:100% 0;">2022-09-17 00:00:00.000</div>
<div class="t" style="top:286.8px;font-size:12px;line-height:15px;color:#9a9a9a;right:224px;transform:scaleX(0.9640);transform-origin:100% 0;">[NULL]</div>
<div class="t" style="top:286.8px;font-size:12px;line-height:15px;color:#000;right:32px;transform:scaleX(0.9166);transform-origin:100% 0;">2022-09-17 00:00:00.000</div>
<div class="t" style="top:305.8px;font-size:12px;line-height:15px;color:#000;left:483px;">7</div>
<div class="t" style="top:305.8px;font-size:12px;line-height:15px;color:#000;right:700px;transform:scaleX(0.9443);transform-origin:100% 0;">0</div>
<div class="t" style="top:305.8px;font-size:12px;line-height:15px;color:#000;right:535px;transform:scaleX(0.9443);transform-origin:100% 0;">0</div>
<div class="t" style="top:305.8px;font-size:12px;line-height:15px;color:#000;right:381px;transform:scaleX(0.9166);transform-origin:100% 0;">2022-09-17 00:00:00.000</div>
<div class="t" style="top:305.8px;font-size:12px;line-height:15px;color:#9a9a9a;right:224px;transform:scaleX(0.9640);transform-origin:100% 0;">[NULL]</div>
<div class="t" style="top:305.8px;font-size:12px;line-height:15px;color:#000;right:32px;transform:scaleX(0.9166);transform-origin:100% 0;">2022-09-17 00:00:00.000</div>
<div class="t" style="top:324.8px;font-size:12px;line-height:15px;color:#000;left:483px;">8</div>
<div class="t" style="top:324.8px;font-size:12px;line-height:15px;color:#000;right:700px;transform:scaleX(0.9443);transform-origin:100% 0;">0</div>
<div class="t" style="top:324.8px;font-size:12px;line-height:15px;color:#000;right:535px;transform:scaleX(0.9443);transform-origin:100% 0;">0</div>
<div class="t" style="top:324.8px;font-size:12px;line-height:15px;color:#000;right:381px;transform:scaleX(0.9166);transform-origin:100% 0;">2022-09-17 00:00:00.000</div>
<div class="t" style="top:324.8px;font-size:12px;line-height:15px;color:#9a9a9a;right:224px;transform:scaleX(0.9640);transform-origin:100% 0;">[NULL]</div>
<div class="t" style="top:324.8px;font-size:12px;line-height:15px;color:#000;right:32px;transform:scaleX(0.9166);transform-origin:100% 0;">2022-09-17 00:00:00.000</div>
<div class="t" style="top:343.8px;font-size:12px;line-height:15px;color:#000;left:483px;">9</div>
<div class="t" style="top:343.8px;font-size:12px;line-height:15px;color:#000;right:700px;transform:scaleX(0.9443);transform-origin:100% 0;">0</div>
<div class="t" style="top:343.8px;font-size:12px;line-height:15px;color:#000;right:535px;transform:scaleX(0.9443);transform-origin:100% 0;">0</div>
<div class="t" style="top:343.8px;font-size:12px;line-height:15px;color:#000;right:381px;transform:scaleX(0.9166);transform-origin:100% 0;">2022-09-17 00:00:00.000</div>
<div class="t" style="top:343.8px;font-size:12px;line-height:15px;color:#9a9a9a;right:224px;transform:scaleX(0.9640);transform-origin:100% 0;">[NULL]</div>
<div class="t" style="top:343.8px;font-size:12px;line-height:15px;color:#000;right:32px;transform:scaleX(0.9166);transform-origin:100% 0;">2022-09-17 00:00:00.000</div>
<div class="t" style="top:362.8px;font-size:12px;line-height:15px;color:#000;left:483px;">10</div>
<div class="t" style="top:362.8px;font-size:12px;line-height:15px;color:#000;right:700px;transform:scaleX(0.9443);transform-origin:100% 0;">0</div>
<div class="t" style="top:362.8px;font-size:12px;line-height:15px;color:#000;right:535px;transform:scaleX(0.9443);transform-origin:100% 0;">0</div>
<div class="t" style="top:362.8px;font-size:12px;line-height:15px;color:#000;right:381px;transform:scaleX(0.9166);transform-origin:100% 0;">2022-09-17 00:00:00.000</div>
<div class="t" style="top:362.8px;font-size:12px;line-height:15px;color:#9a9a9a;right:224px;transform:scaleX(0.9640);transform-origin:100% 0;">[NULL]</div>
<div class="t" style="top:362.8px;font-size:12px;line-height:15px;color:#000;right:32px;transform:scaleX(0.9166);transform-origin:100% 0;">2022-09-17 00:00:00.000</div>
<div class="t" style="top:381.8px;font-size:12px;line-height:15px;color:#000;left:483px;">11</div>
<div class="t" style="top:381.8px;font-size:12px;line-height:15px;color:#000;right:700px;transform:scaleX(0.9443);transform-origin:100% 0;">0</div>
<div class="t" style="top:381.8px;font-size:12px;line-height:15px;color:#000;right:535px;transform:scaleX(0.9443);transform-origin:100% 0;">0</div>
<div class="t" style="top:381.8px;font-size:12px;line-height:15px;color:#000;right:381px;transform:scaleX(0.9166);transform-origin:100% 0;">2022-09-17 00:00:00.000</div>
<div class="t" style="top:381.8px;font-size:12px;line-height:15px;color:#9a9a9a;right:224px;transform:scaleX(0.9640);transform-origin:100% 0;">[NULL]</div>
<div class="t" style="top:381.8px;font-size:12px;line-height:15px;color:#000;right:32px;transform:scaleX(0.9166);transform-origin:100% 0;">2022-09-17 00:00:00.000</div>
<div class="t" style="top:400.8px;font-size:12px;line-height:15px;color:#000;left:483px;">12</div>
<div class="t" style="top:400.8px;font-size:12px;line-height:15px;color:#000;right:700px;transform:scaleX(0.9443);transform-origin:100% 0;">0</div>
<div class="t" style="top:400.8px;font-size:12px;line-height:15px;color:#000;right:535px;transform:scaleX(0.9443);transform-origin:100% 0;">0</div>
<div class="t" style="top:400.8px;font-size:12px;line-height:15px;color:#000;right:381px;transform:scaleX(0.9166);transform-origin:100% 0;">2022-09-17 00:00:00.000</div>
<div class="t" style="top:400.8px;font-size:12px;line-height:15px;color:#9a9a9a;right:224px;transform:scaleX(0.9640);transform-origin:100% 0;">[NULL]</div>
<div class="t" style="top:400.8px;font-size:12px;line-height:15px;color:#000;right:32px;transform:scaleX(0.9166);transform-origin:100% 0;">2022-09-17 00:00:00.000</div>
<div class="t" style="top:419.8px;font-size:12px;line-height:15px;color:#000;left:483px;">13</div>
<div class="t" style="top:419.8px;font-size:12px;line-height:15px;color:#000;right:700px;transform:scaleX(0.9443);transform-origin:100% 0;">0</div>
<div class="t" style="top:419.8px;font-size:12px;line-height:15px;color:#000;right:535px;transform:scaleX(0.9443);transform-origin:100% 0;">0</div>
<div class="t" style="top:419.8px;font-size:12px;line-height:15px;color:#000;right:381px;transform:scaleX(0.9166);transform-origin:100% 0;">2022-09-17 00:00:00.000</div>
<div class="t" style="top:419.8px;font-size:12px;line-height:15px;color:#9a9a9a;right:224px;transform:scaleX(0.9640);transform-origin:100% 0;">[NULL]</div>
<div class="t" style="top:419.8px;font-size:12px;line-height:15px;color:#000;right:32px;transform:scaleX(0.9166);transform-origin:100% 0;">2022-09-17 00:00:00.000</div>
<div class="t" style="top:438.8px;font-size:12px;line-height:15px;color:#000;left:483px;">14</div>
<div class="t" style="top:438.8px;font-size:12px;line-height:15px;color:#000;right:700px;transform:scaleX(0.9443);transform-origin:100% 0;">0</div>
<div class="t" style="top:438.8px;font-size:12px;line-height:15px;color:#000;right:535px;transform:scaleX(0.9443);transform-origin:100% 0;">0</div>
<div class="t" style="top:438.8px;font-size:12px;line-height:15px;color:#000;right:381px;transform:scaleX(0.9166);transform-origin:100% 0;">2022-09-17 00:00:00.000</div>
<div class="t" style="top:438.8px;font-size:12px;line-height:15px;color:#9a9a9a;right:224px;transform:scaleX(0.9640);transform-origin:100% 0;">[NULL]</div>
<div class="t" style="top:438.8px;font-size:12px;line-height:15px;color:#000;right:32px;transform:scaleX(0.9166);transform-origin:100% 0;">2022-09-17 00:00:00.000</div>
<div class="t" style="top:457.8px;font-size:12px;line-height:15px;color:#000;left:483px;">15</div>
<div class="t" style="top:457.8px;font-size:12px;line-height:15px;color:#000;right:700px;transform:scaleX(0.9443);transform-origin:100% 0;">0</div>
<div class="t" style="top:457.8px;font-size:12px;line-height:15px;color:#000;right:535px;transform:scaleX(0.9443);transform-origin:100% 0;">0</div>
<div class="t" style="top:457.8px;font-size:12px;line-height:15px;color:#000;right:381px;transform:scaleX(0.9166);transform-origin:100% 0;">2022-09-17 00:00:00.000</div>
<div class="t" style="top:457.8px;font-size:12px;line-height:15px;color:#9a9a9a;right:224px;transform:scaleX(0.9640);transform-origin:100% 0;">[NULL]</div>
<div class="t" style="top:457.8px;font-size:12px;line-height:15px;color:#000;right:32px;transform:scaleX(0.9166);transform-origin:100% 0;">2022-09-17 00:00:00.000</div>
<div class="t" style="top:476.8px;font-size:12px;line-height:15px;color:#000;left:483px;">16</div>
<div class="t" style="top:476.8px;font-size:12px;line-height:15px;color:#000;right:700px;transform:scaleX(0.9443);transform-origin:100% 0;">0</div>
<div class="t" style="top:476.8px;font-size:12px;line-height:15px;color:#000;right:535px;transform:scaleX(0.9443);transform-origin:100% 0;">0</div>
<div class="t" style="top:476.8px;font-size:12px;line-height:15px;color:#000;right:381px;transform:scaleX(0.9166);transform-origin:100% 0;">2022-09-17 00:00:00.000</div>
<div class="t" style="top:476.8px;font-size:12px;line-height:15px;color:#9a9a9a;right:224px;transform:scaleX(0.9640);transform-origin:100% 0;">[NULL]</div>
<div class="t" style="top:476.8px;font-size:12px;line-height:15px;color:#000;right:32px;transform:scaleX(0.9166);transform-origin:100% 0;">2022-09-17 00:00:00.000</div>
<div class="t" style="top:495.8px;font-size:12px;line-height:15px;color:#000;left:483px;">17</div>
<div class="t" style="top:495.8px;font-size:12px;line-height:15px;color:#000;right:700px;transform:scaleX(0.9443);transform-origin:100% 0;">0</div>
<div class="t" style="top:495.8px;font-size:12px;line-height:15px;color:#000;right:535px;transform:scaleX(0.9443);transform-origin:100% 0;">0</div>
<div class="t" style="top:495.8px;font-size:12px;line-height:15px;color:#000;right:381px;transform:scaleX(0.9166);transform-origin:100% 0;">2022-09-17 00:00:00.000</div>
<div class="t" style="top:495.8px;font-size:12px;line-height:15px;color:#9a9a9a;right:224px;transform:scaleX(0.9640);transform-origin:100% 0;">[NULL]</div>
<div class="t" style="top:495.8px;font-size:12px;line-height:15px;color:#000;right:32px;transform:scaleX(0.9166);transform-origin:100% 0;">2022-09-17 00:00:00.000</div>
<div class="t" style="top:514.8px;font-size:12px;line-height:15px;color:#000;left:483px;">18</div>
<div class="t" style="top:514.8px;font-size:12px;line-height:15px;color:#000;right:700px;transform:scaleX(0.9443);transform-origin:100% 0;">0</div>
<div class="t" style="top:514.8px;font-size:12px;line-height:15px;color:#000;right:535px;transform:scaleX(0.9443);transform-origin:100% 0;">0</div>
<div class="t" style="top:514.8px;font-size:12px;line-height:15px;color:#000;right:381px;transform:scaleX(0.9166);transform-origin:100% 0;">2022-09-17 00:00:00.000</div>
<div class="t" style="top:514.8px;font-size:12px;line-height:15px;color:#9a9a9a;right:224px;transform:scaleX(0.9640);transform-origin:100% 0;">[NULL]</div>
<div class="t" style="top:514.8px;font-size:12px;line-height:15px;color:#000;right:32px;transform:scaleX(0.9166);transform-origin:100% 0;">2022-09-17 00:00:00.000</div>
<svg class="a" style="left:942px;top:302px;" width="13" height="21" viewBox="0 0 13 21"><path d="M1.5 1.5 v15.5 l3.8 -3.6 2.8 6 2.4 -1.1 -2.7 -5.8 h5.2z" fill="#fff" stroke="#000" stroke-width="1.1"/></svg>
<div class="a" style="left:479px;top:670px;width:855px;height:16px;background:#f0f0f0;"></div>
<div class="a" style="left:894px;top:670px;width:424px;height:15px;background:#cdcdcd;"></div>
<svg class="a" style="left:483px;top:673px;" width="8" height="10" viewBox="0 0 8 10"><path d="M6 1 L2 5 L6 9" fill="none" stroke="#444" stroke-width="1.8"/></svg>
<svg class="a" style="left:1323px;top:673px;" width="8" height="10" viewBox="0 0 8 10"><path d="M2 1 L6 5 L2 9" fill="none" stroke="#444" stroke-width="1.8"/></svg>
<svg class="a" style="left:489px;top:692px;" width="16" height="16" viewBox="0 0 16 16"><g transform="rotate(-45 8 8)"><path d="M2 8 a5 4.5 0 0 1 9 -2.5 h-2 l3.5 3.5 3.5 -3.5 h-2 a7 6.5 0 0 0 -13 2.5z" fill="#7fdcf5" stroke="#1a7fa0" stroke-width="1.3"/><path d="M14 8 a5 4.5 0 0 1 -9 2.5 h2 l-3.5 -3.5 -3.5 3.5 h2 a7 6.5 0 0 0 13 -2.5z" fill="#7fdcf5" stroke="#1a7fa0" stroke-width="1.3"/></g></svg>
<div class="t" style="top:694.3px;font-size:12px;line-height:15px;color:#000;left:509px;transform:scaleX(0.9282);transform-origin:0 0;">Refresh</div>
<svg class="a" style="left:560px;top:698px;" width="10" height="6" viewBox="0 0 10 6"><path d="M1 1 L9 1 L5 5 Z" fill="#222"/></svg>
<div class="a" style="left:577.5px;top:695px;width:2px;height:2px;background:#a8a8a8;"></div>
<div class="a" style="left:577.5px;top:699px;width:2px;height:2px;background:#a8a8a8;"></div>
<div class="a" style="left:577.5px;top:703px;width:2px;height:2px;background:#a8a8a8;"></div>
<div class="a" style="left:577.5px;top:707px;width:2px;height:2px;background:#a8a8a8;"></div>
<svg class="a" style="left:589px;top:694px;" width="15" height="15" viewBox="0 0 15 15"><circle cx="7.5" cy="7.5" r="6.8" fill="none" stroke="#a8a8a8" stroke-width="1.2"/><path d="M4 7.5 l2.5 2.5 4.5 -5" fill="none" stroke="#a8a8a8" stroke-width="1.2"/></svg>
<div class="t" style="top:694.3px;font-size:12px;line-height:15px;color:#a0a0a0;left:608px;transform:scaleX(0.8411);transform-origin:0 0;">Save</div>
<svg class="a" style="left:644px;top:698px;" width="10" height="6" viewBox="0 0 10 6"><path d="M1 1 L9 1 L5 5 Z" fill="#999"/></svg>
<svg class="a" style="left:662px;top:694px;" width="14" height="14" viewBox="0 0 14 14"><rect x="0.5" y="0.5" width="13" height="13" fill="none" stroke="#a8a8a8"/><path d="M3.5 3.5 l7 7 M10.5 3.5 l-7 7" stroke="#a8a8a8"/></svg>
<div class="t" style="top:694.3px;font-size:12px;line-height:15px;color:#a0a0a0;left:680px;transform:scaleX(0.9636);transform-origin:0 0;">Cancel</div>
<div class="a" style="left:725.5px;top:695px;width:2px;height:2px;background:#a8a8a8;"></div>
<div class="a" style="left:725.5px;top:699px;width:2px;height:2px;background:#a8a8a8;"></div>
<div class="a" style="left:725.5px;top:703px;width:2px;height:2px;background:#a8a8a8;"></div>
<div class="a" style="left:725.5px;top:707px;width:2px;height:2px;background:#a8a8a8;"></div>
<svg class="a" style="left:734px;top:695px;" width="16" height="15" viewBox="0 0 16 15"><path d="M0 1.5 h14 M0 6 h10 M0 10.5 h6" stroke="#1e88d0" stroke-width="2"/><path d="M7 14 l7 -7" stroke="#1e88d0" stroke-width="2"/></svg>
<svg class="a" style="left:758px;top:695px;" width="16" height="15" viewBox="0 0 16 15"><path d="M0 1.5 h14 M0 6 h10 M0 10.5 h6" stroke="#1e88d0" stroke-width="2"/><path d="M8 10.5 h7 M11.5 7 v7.5" stroke="#2e9e3a" stroke-width="2"/></svg>
<svg class="a" style="left:782px;top:695px;" width="15" height="15" viewBox="0 0 15 15"><path d="M0 1.5 h14 M0 6 h3 M0 10.5 h3" stroke="#1e88d0" stroke-width="2"/><path d="M6.5 5 q-2 4 0 8 M12.5 5 q2 4 0 8 M7 9 h5 M9.5 6.5 v5" fill="none" stroke="#1e88d0" stroke-width="1.3"/></svg>
<svg class="a" style="left:806px;top:695px;" width="16" height="15" viewBox="0 0 16 15"><path d="M0 1.5 h14 M0 6 h10 M0 10.5 h6" stroke="#1e88d0" stroke-width="2"/><path d="M7 10.5 h9" stroke="#d03020" stroke-width="2"/></svg>
<div class="a" style="left:829.5px;top:695px;width:2px;height:2px;background:#a8a8a8;"></div>
<div class="a" style="left:829.5px;top:699px;width:2px;height:2px;background:#a8a8a8;"></div>
<div class="a" style="left:829.5px;top:703px;width:2px;height:2px;background:#a8a8a8;"></div>
<div class="a" style="left:829.5px;top:707px;width:2px;height:2px;background:#a8a8a8;"></div>
<svg class="a" style="left:837px;top:694px;" width="13" height="15" viewBox="0 0 13 15"><path d="M1 0 v15" stroke="#999" stroke-width="2"/><path d="M11 1 l-6 6.5 6 6.5" fill="none" stroke="#999" stroke-width="2"/></svg>
<svg class="a" style="left:862px;top:694px;" width="9" height="15" viewBox="0 0 9 15"><path d="M8 1 l-6 6.5 6 6.5" fill="none" stroke="#999" stroke-width="2"/></svg>
<svg class="a" style="left:887px;top:694px;" width="9" height="15" viewBox="0 0 9 15"><path d="M1 1 l6 6.5 -6 6.5" fill="none" stroke="#1a80b8" stroke-width="2"/></svg>
<svg class="a" style="left:907px;top:694px;" width="13" height="15" viewBox="0 0 13 15"><path d="M1 1 l6 6.5 -6 6.5" fill="none" stroke="#1a80b8" stroke-width="2"/><path d="M11.5 0 v15" stroke="#1a80b8" stroke-width="2"/></svg>
<svg class="a" style="left:929px;top:694px;" width="14" height="14" viewBox="0 0 14 14"><path d="M0.5 3 v-2.5 h3 M10.5 0.5 h3 v3 M13.5 10.5 v3 h-3 M3.5 13.5 h-3 v-3" fill="none" stroke="#aaa"/><path d="M4.5 3.5 h3.5 l2 2 v5 h-5.5z" fill="none" stroke="#aaa"/></svg>
<div class="a" style="left:955.5px;top:695px;width:2px;height:2px;background:#a8a8a8;"></div>
<div class="a" style="left:955.5px;top:699px;width:2px;height:2px;background:#a8a8a8;"></div>
<div class="a" style="left:955.5px;top:703px;width:2px;height:2px;background:#a8a8a8;"></div>
<div class="a" style="left:955.5px;top:707px;width:2px;height:2px;background:#a8a8a8;"></div>
<svg class="a" style="left:968px;top:694px;" width="13" height="14" viewBox="0 0 13 14"><path d="M6.5 1 v9 M2.5 4.5 l4-3.5 4 3.5" fill="none" stroke="#1a80a8" stroke-width="1.8"/><path d="M1 8.5 v4.5 h11 v-4.5" fill="none" stroke="#1a80a8" stroke-width="1.5"/></svg>
<div class="t" style="top:694.3px;font-size:12px;line-height:15px;color:#000;left:986px;transform:scaleX(0.9526);transform-origin:0 0;">Exportar datos ...</div>
<svg class="a" style="left:1085px;top:698px;" width="10" height="6" viewBox="0 0 10 6"><path d="M1 1 L9 1 L5 5 Z" fill="#222"/></svg>
<div class="a" style="left:1102.5px;top:695px;width:2px;height:2px;background:#a8a8a8;"></div>
<div class="a" style="left:1102.5px;top:699px;width:2px;height:2px;background:#a8a8a8;"></div>
<div class="a" style="left:1102.5px;top:703px;width:2px;height:2px;background:#a8a8a8;"></div>
<div class="a" style="left:1102.5px;top:707px;width:2px;height:2px;background:#a8a8a8;"></div>
<svg class="a" style="left:1110px;top:693px;" width="15" height="15" viewBox="0 0 15 15"><circle cx="7.5" cy="7.5" r="5.30" fill="#1e88d0"/><rect x="5.90" y="0.3" width="3.2" height="3.5" fill="#1e88d0" transform="rotate(0 7.5 7.5)"/><rect x="5.90" y="0.3" width="3.2" height="3.5" fill="#1e88d0" transform="rotate(45 7.5 7.5)"/><rect x="5.90" y="0.3" width="3.2" height="3.5" fill="#1e88d0" transform="rotate(90 7.5 7.5)"/><rect x="5.90" y="0.3" width="3.2" height="3.5" fill="#1e88d0" transform="rotate(135 7.5 7.5)"/><rect x="5.90" y="0.3" width="3.2" height="3.5" fill="#1e88d0" transform="rotate(180 7.5 7.5)"/><rect x="5.90" y="0.3" width="3.2" height="3.5" fill="#1e88d0" transform="rotate(225 7.5 7.5)"/><rect x="5.90" y="0.3" width="3.2" height="3.5" fill="#1e88d0" transform="rotate(270 7.5 7.5)"/><rect x="5.90" y="0.3" width="3.2" height="3.5" fill="#1e88d0" transform="rotate(315 7.5 7.5)"/><path d="M7.5 4.9 l2.6 2.6 -2.6 2.6 -2.6 -2.6z" fill="#6cc4f0"/></svg>
<div class="a" style="left:1132px;top:690px;width:57px;height:22px;background:#fff;box-sizing:border-box;border:1px solid #a8a8a8;"></div>
<div class="t" style="top:694.3px;font-size:12px;line-height:15px;color:#000;left:1138px;transform:scaleX(0.8993);transform-origin:0 0;">200</div>
<svg class="a" style="left:1195px;top:692px;" width="16" height="17" viewBox="0 0 16 17"><path d="M1 1 h14" stroke="#1e88d0" stroke-width="1.6"/><path d="M8 4 v7 M4.5 7.5 l3.5 3.5 3.5-3.5" fill="none" stroke="#1e88d0" stroke-width="1.6"/><path d="M1 12 v4 h14 v-4" fill="none" stroke="#1e88d0" stroke-width="1.6"/></svg>
<div class="t" style="top:694.3px;font-size:12px;line-height:15px;color:#000;left:1219px;transform:scaleX(0.8993);transform-origin:0 0;">18</div>
<div class="a" style="left:1238.5px;top:695px;width:2px;height:2px;background:#a8a8a8;"></div>
<div class="a" style="left:1238.5px;top:699px;width:2px;height:2px;background:#a8a8a8;"></div>
<div class="a" style="left:1238.5px;top:703px;width:2px;height:2px;background:#a8a8a8;"></div>
<div class="a" style="left:1238.5px;top:707px;width:2px;height:2px;background:#a8a8a8;"></div>
<div class="t" style="top:722.0px;font-size:10px;line-height:13px;color:#777;left:491px;">···</div>
<div class="t" style="top:723.3px;font-size:12px;line-height:15px;color:#000;left:510px;transform:scaleX(0.9662);transform-origin:0 0;">18 row(s) fetched - 2ms (1ms fetch), on 2023-06-24 at 09:22:26</div>
<svg class="a" style="left:1339px;top:722px;" width="15" height="17" viewBox="0 0 15 17"><rect x="0.5" y="3" width="5" height="13" fill="#1e88d0"/><path d="M8 16 h6 v-8 M8 7 l3-3 3 3 M11 4 v6" fill="none" stroke="#1e88d0" stroke-width="1.8"/></svg>
<div class="a" style="left:454px;top:740px;width:906px;height:1px;background:#d8d8d8;"></div>
<div class="a" style="left:0px;top:741px;width:1360px;height:27px;background:#f0f0f0;"></div>
<div class="a" style="left:542px;top:742px;width:1px;height:22px;background:#a0a0a0;"></div>
<div class="a" style="left:577px;top:742px;width:1px;height:22px;background:#a0a0a0;"></div>
<div class="a" style="left:601px;top:742px;width:1px;height:22px;background:#a0a0a0;"></div>
<div class="a" style="left:735px;top:742px;width:1px;height:22px;background:#a0a0a0;"></div>
<div class="a" style="left:863px;top:742px;width:1px;height:22px;background:#a0a0a0;"></div>
<div class="a" style="left:991px;top:742px;width:1px;height:22px;background:#a0a0a0;"></div>
<div class="a" style="left:1075.5px;top:748px;width:2px;height:2px;background:#b0b0b0;"></div>
<div class="a" style="left:1075.5px;top:752px;width:2px;height:2px;background:#b0b0b0;"></div>
<div class="a" style="left:1075.5px;top:756px;width:2px;height:2px;background:#b0b0b0;"></div>
<div class="a" style="left:1075.5px;top:760px;width:2px;height:2px;background:#b0b0b0;"></div>
<div class="t" style="top:746.3px;font-size:12px;line-height:15px;color:#000;left:549px;transform:scaleX(0.8750);transform-origin:0 0;">CET</div>
<div class="t" style="top:746.3px;font-size:12px;line-height:15px;color:#000;left:584px;transform:scaleX(0.9470);transform-origin:0 0;">es</div>
</body></html>
